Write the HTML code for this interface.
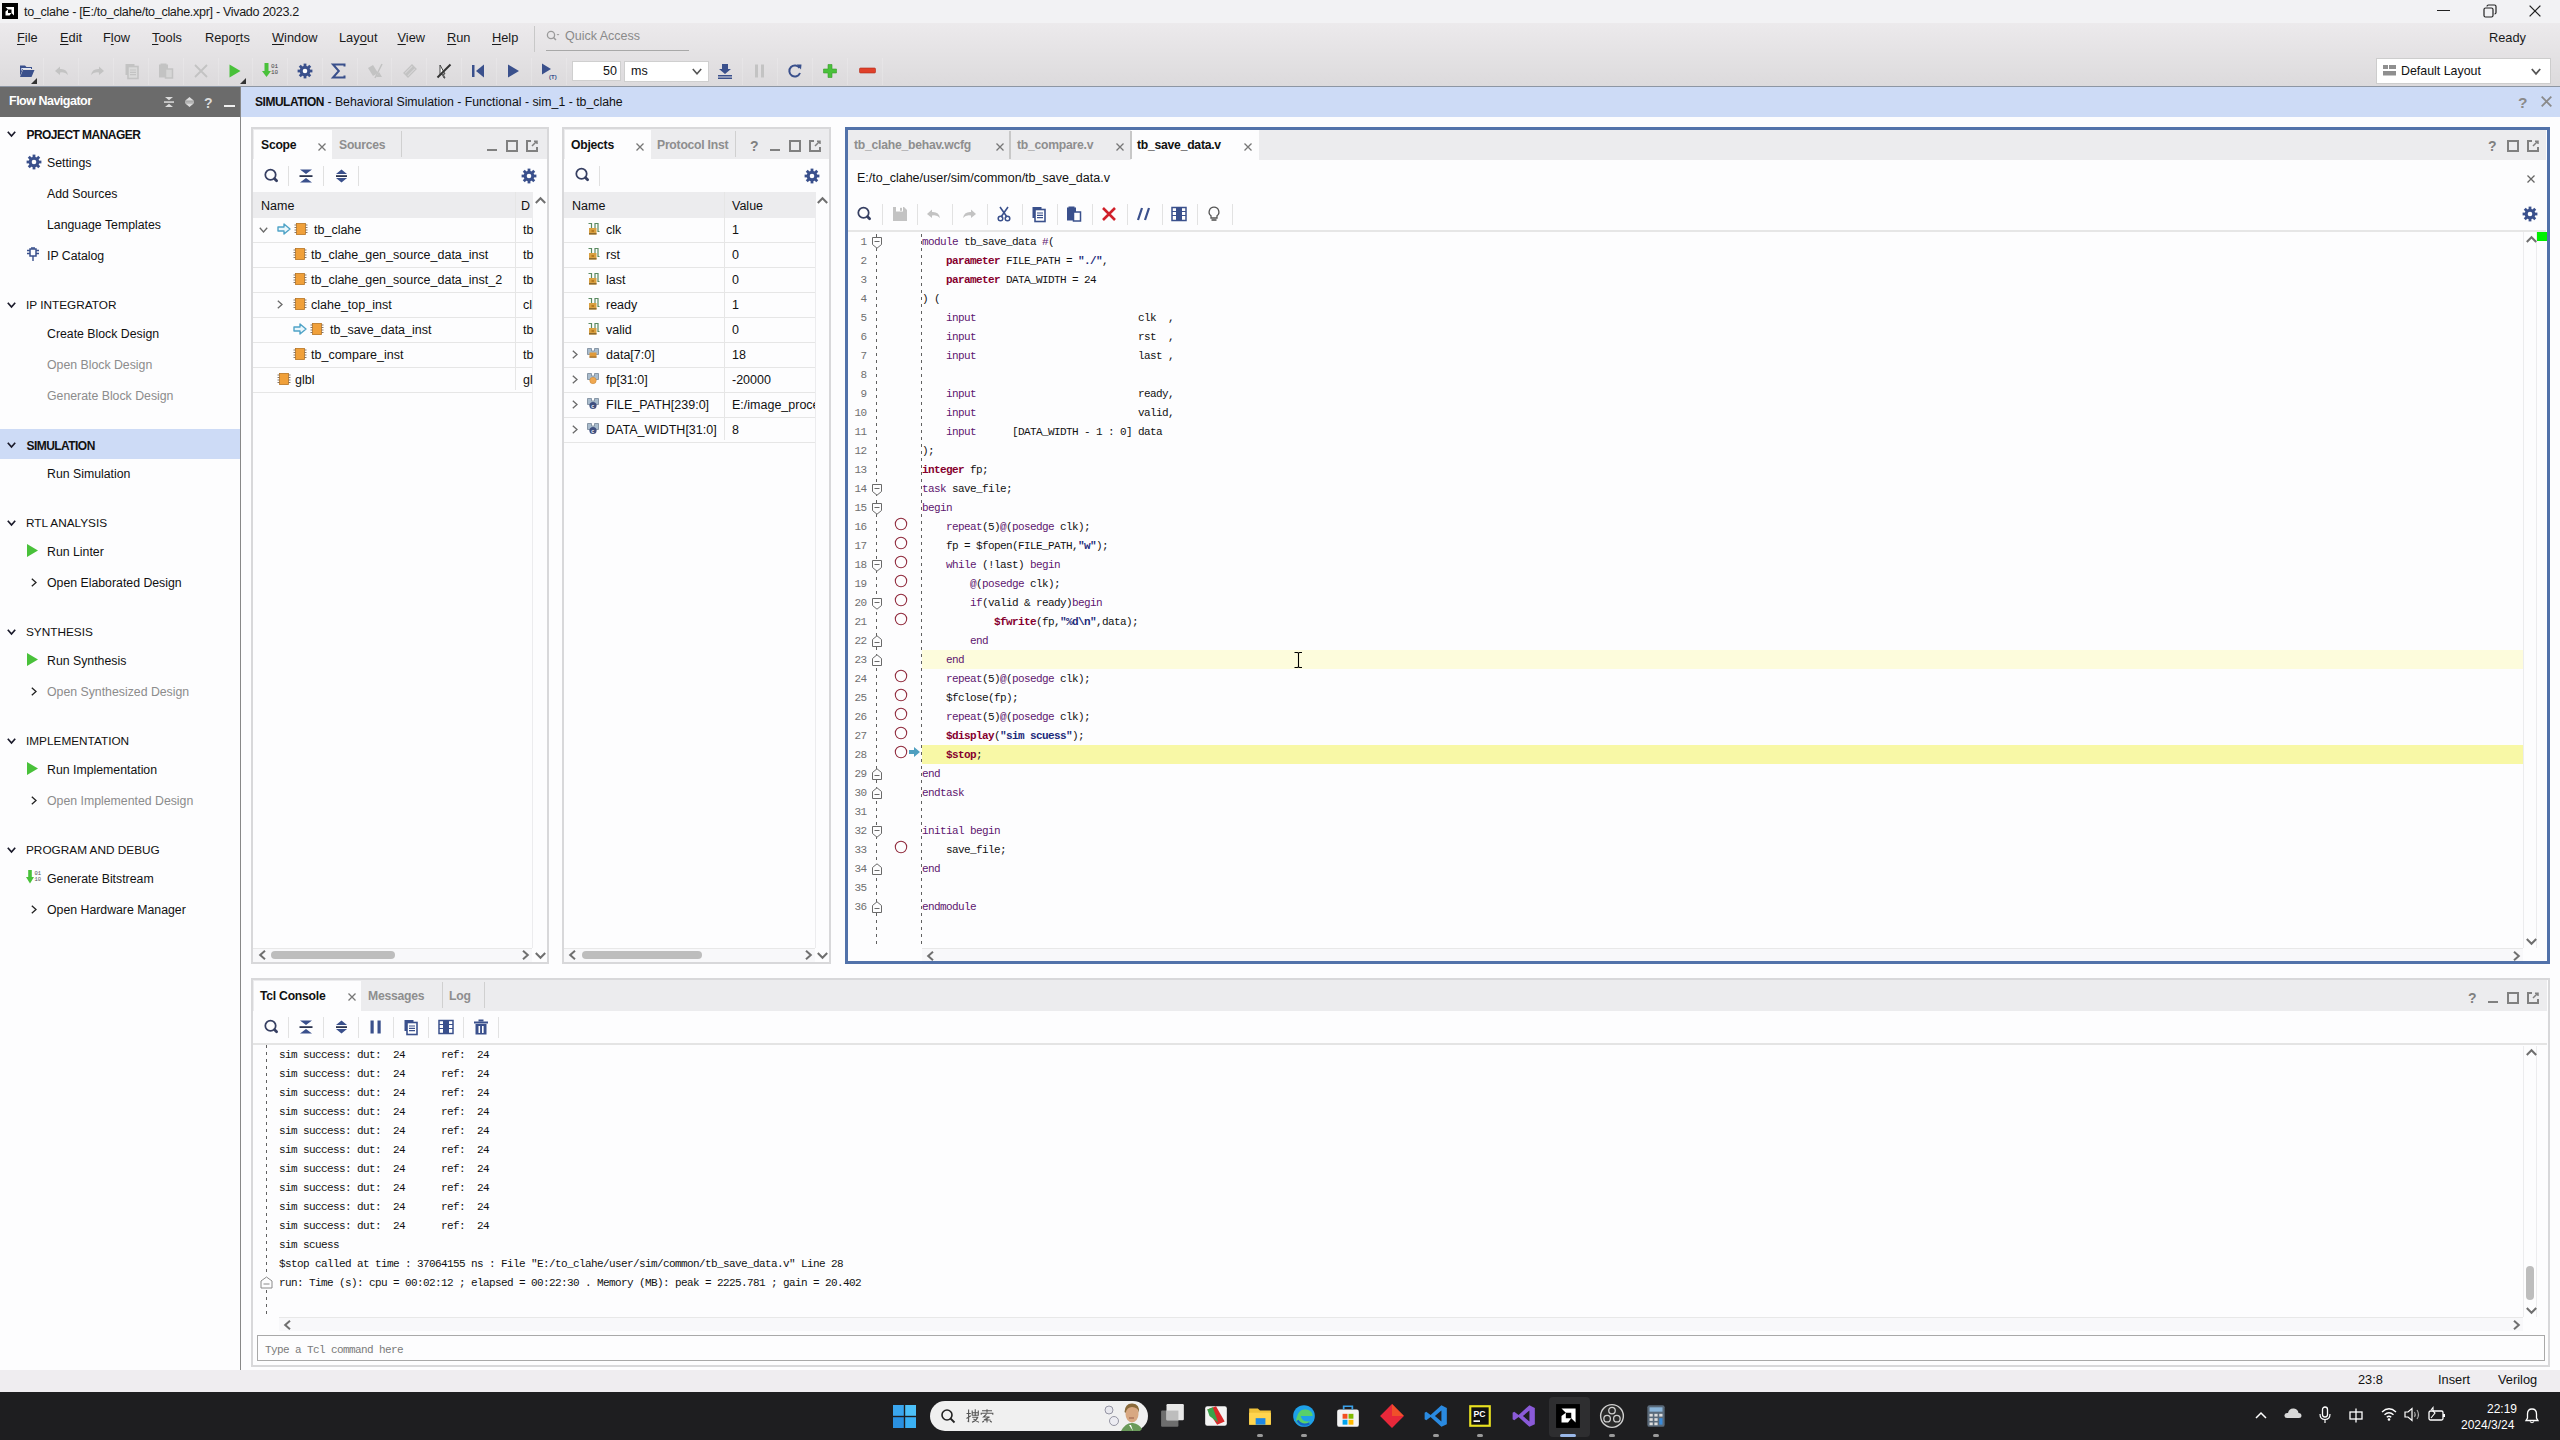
<!DOCTYPE html>
<html><head><meta charset="utf-8">
<style>
*{box-sizing:border-box}
html,body{margin:0;padding:0}
body{width:2560px;height:1440px;position:relative;overflow:hidden;background:#fdfdfe;font-family:"Liberation Sans",sans-serif;color:#111}
.a{position:absolute}
.t{position:absolute;white-space:pre;line-height:1}
.ico{position:absolute;overflow:visible}
.u{text-decoration:underline;text-decoration-thickness:1px;text-underline-offset:2px}
</style></head>
<body>
<div class="a" style="left:0px;top:0px;width:2560px;height:23px;background:#f2f2f4;"></div>
<div class="a" style="left:2px;top:3px;width:16px;height:16px;background:#000;"></div>
<svg class="ico" style="left:2px;top:3px;" width="16" height="16" viewBox="0 0 16 16"><path d="M3.5 4 H12 V12.5 L9.5 10 V6.5 H6 Z" fill="#fff"/><path d="M3.5 8.5 L6 6.5 V10 H9.5 L7.5 12.5 H3.5 Z" fill="#fff"/></svg>
<div class="t" style="left:24px;top:6.09px;font-size:12.6px;color:#1a1a1a;font-weight:normal;font-family:'Liberation Sans',sans-serif;letter-spacing:-0.33px">to_clahe - [E:/to_clahe/to_clahe.xpr] - Vivado 2023.2</div>
<div class="a" style="left:2437px;top:10px;width:13px;height:1.3px;background:#222;"></div>
<svg class="ico" style="left:2483px;top:4px;" width="14" height="14" viewBox="0 0 14 14"><rect x="1" y="4" width="9" height="9" rx="1.5" fill="none" stroke="#222" stroke-width="1.2"/><path d="M4 2.5 Q4 1 5.5 1 H11.5 Q13 1 13 2.5 V8.5 Q13 10 11.5 10" fill="none" stroke="#222" stroke-width="1.2"/></svg>
<svg class="ico" style="left:2529px;top:5px;" width="12" height="12" viewBox="0 0 12 12"><path d="M0.6 0.6 L11.4 11.4 M11.4 0.6 L0.6 11.4" stroke="#222" stroke-width="1.3"/></svg>
<div class="a" style="left:0px;top:23px;width:2560px;height:63px;background:linear-gradient(#eceaec,#dcdadc);"></div>
<div class="a" style="left:0px;top:86px;width:2560px;height:1px;background:#8d96a3;"></div>
<div class="t" style="left:17px;top:32.12px;font-size:12.8px;color:#1a1a1a;font-weight:normal;font-family:'Liberation Sans',sans-serif;"><span class="u">F</span>ile</div>
<div class="t" style="left:60px;top:32.12px;font-size:12.8px;color:#1a1a1a;font-weight:normal;font-family:'Liberation Sans',sans-serif;"><span class="u">E</span>dit</div>
<div class="t" style="left:103px;top:32.12px;font-size:12.8px;color:#1a1a1a;font-weight:normal;font-family:'Liberation Sans',sans-serif;">F<span class="u">l</span>ow</div>
<div class="t" style="left:152px;top:32.12px;font-size:12.8px;color:#1a1a1a;font-weight:normal;font-family:'Liberation Sans',sans-serif;"><span class="u">T</span>ools</div>
<div class="t" style="left:205px;top:32.12px;font-size:12.8px;color:#1a1a1a;font-weight:normal;font-family:'Liberation Sans',sans-serif;">Repo<span class="u">r</span>ts</div>
<div class="t" style="left:272px;top:32.12px;font-size:12.8px;color:#1a1a1a;font-weight:normal;font-family:'Liberation Sans',sans-serif;"><span class="u">W</span>indow</div>
<div class="t" style="left:339px;top:32.12px;font-size:12.8px;color:#1a1a1a;font-weight:normal;font-family:'Liberation Sans',sans-serif;">Lay<span class="u">o</span>ut</div>
<div class="t" style="left:397.5px;top:32.12px;font-size:12.8px;color:#1a1a1a;font-weight:normal;font-family:'Liberation Sans',sans-serif;"><span class="u">V</span>iew</div>
<div class="t" style="left:447px;top:32.12px;font-size:12.8px;color:#1a1a1a;font-weight:normal;font-family:'Liberation Sans',sans-serif;"><span class="u">R</span>un</div>
<div class="t" style="left:492px;top:32.12px;font-size:12.8px;color:#1a1a1a;font-weight:normal;font-family:'Liberation Sans',sans-serif;"><span class="u">H</span>elp</div>
<div class="a" style="left:534px;top:26px;width:1px;height:26px;background:#c8c8c8;"></div>
<svg class="ico" style="left:546px;top:30px;" width="14" height="12" viewBox="0 0 14 12"><circle cx="5" cy="5" r="3.6" fill="none" stroke="#9a9a9a" stroke-width="1.3"/><path d="M7.5 7.5 L10 10" stroke="#9a9a9a" stroke-width="1.5"/><path d="M10.5 4 L13.5 4 L12 5.5 Z" fill="#9a9a9a"/></svg>
<div class="t" style="left:565px;top:30.38px;font-size:12.5px;color:#8a8a8a;font-weight:normal;font-family:'Liberation Sans',sans-serif;">Quick Access</div>
<div class="a" style="left:546px;top:50px;width:143px;height:1px;background:#a8a8a8;"></div>
<div class="t" style="left:2489px;top:32.12px;font-size:12.8px;color:#1a1a1a;font-weight:normal;font-family:'Liberation Sans',sans-serif;">Ready</div>
<div class="a" style="left:43px;top:58px;width:1px;height:27px;background:rgba(255,255,255,0.18);"></div>
<div class="a" style="left:78px;top:58px;width:1px;height:27px;background:rgba(255,255,255,0.18);"></div>
<div class="a" style="left:113px;top:58px;width:1px;height:27px;background:rgba(255,255,255,0.18);"></div>
<div class="a" style="left:148px;top:58px;width:1px;height:27px;background:rgba(255,255,255,0.18);"></div>
<div class="a" style="left:183px;top:58px;width:1px;height:27px;background:rgba(255,255,255,0.18);"></div>
<div class="a" style="left:218px;top:58px;width:1px;height:27px;background:rgba(255,255,255,0.18);"></div>
<div class="a" style="left:252px;top:58px;width:1px;height:27px;background:rgba(255,255,255,0.18);"></div>
<div class="a" style="left:287px;top:58px;width:1px;height:27px;background:rgba(255,255,255,0.18);"></div>
<div class="a" style="left:322px;top:58px;width:1px;height:27px;background:rgba(255,255,255,0.18);"></div>
<div class="a" style="left:357px;top:58px;width:1px;height:27px;background:rgba(255,255,255,0.18);"></div>
<div class="a" style="left:391px;top:58px;width:1px;height:27px;background:rgba(255,255,255,0.18);"></div>
<div class="a" style="left:426px;top:58px;width:1px;height:27px;background:rgba(255,255,255,0.18);"></div>
<div class="a" style="left:461px;top:58px;width:1px;height:27px;background:rgba(255,255,255,0.18);"></div>
<div class="a" style="left:496px;top:58px;width:1px;height:27px;background:rgba(255,255,255,0.18);"></div>
<div class="a" style="left:531px;top:58px;width:1px;height:27px;background:rgba(255,255,255,0.18);"></div>
<div class="a" style="left:566px;top:58px;width:1px;height:27px;background:rgba(255,255,255,0.18);"></div>
<div class="a" style="left:742px;top:58px;width:1px;height:27px;background:rgba(255,255,255,0.18);"></div>
<div class="a" style="left:777px;top:58px;width:1px;height:27px;background:rgba(255,255,255,0.18);"></div>
<div class="a" style="left:812px;top:58px;width:1px;height:27px;background:rgba(255,255,255,0.18);"></div>
<div class="a" style="left:847px;top:58px;width:1px;height:27px;background:rgba(255,255,255,0.18);"></div>
<div class="a" style="left:882px;top:58px;width:1px;height:27px;background:rgba(255,255,255,0.18);"></div>
<svg class="ico" style="left:19px;top:63px;" width="16" height="16" viewBox="0 0 16 16"><path d="M1 2.5 H6 L7.5 4 H13 V6 H4 L1 13 Z" fill="#3a508c"/><path d="M4 7 H15.5 L12.5 14 H1 Z" fill="#3a508c"/><path d="M2.3 5 H12 V6 H3.2 L2.3 8.5 Z" fill="#dfe6f5"/></svg>
<svg class="ico" style="left:31px;top:78px;" width="6" height="6" viewBox="0 0 6 6"><path d="M6 0 V6 H0 Z" fill="#333"/></svg>
<svg class="ico" style="left:54px;top:63px;" width="16" height="16" viewBox="0 0 16 16"><path d="M1 8 L6 3.5 V6 Q13 5.5 14 12 Q11 8.5 6 9.5 V12 Z" fill="#c3c3c3"/></svg>
<svg class="ico" style="left:89px;top:63px;" width="16" height="16" viewBox="0 0 16 16"><path d="M15 8 L10 3.5 V6 Q3 5.5 2 12 Q5 8.5 10 9.5 V12 Z" fill="#c3c3c3"/></svg>
<svg class="ico" style="left:124px;top:63px;" width="16" height="16" viewBox="0 0 16 16"><rect x="1.5" y="1" width="9" height="11" fill="#c3c3c3"/><rect x="4" y="3.5" width="10" height="12" fill="#dadada" stroke="#c3c3c3" stroke-width="1.6"/><path d="M6 7 H12 M6 9.3 H12 M6 11.6 H12" stroke="#c3c3c3" stroke-width="1.2"/></svg>
<svg class="ico" style="left:158px;top:63px;" width="16" height="16" viewBox="0 0 16 16"><rect x="1" y="1.5" width="9" height="13" fill="#c3c3c3"/><rect x="2.5" y="0.5" width="6" height="2" fill="#c3c3c3"/><rect x="7.5" y="6" width="7" height="9" fill="#d6d6d6" stroke="#c3c3c3" stroke-width="1.5"/></svg>
<svg class="ico" style="left:194px;top:64px;" width="14" height="14" viewBox="0 0 14 14"><path d="M1 1 L13 13 M13 1 L1 13" stroke="#c3c3c3" stroke-width="1.8"/></svg>
<svg class="ico" style="left:228px;top:63px;" width="14" height="16" viewBox="0 0 14 16"><path d="M1.5 1.5 L12.5 8 L1.5 14.5 Z" fill="#49c13a"/></svg>
<svg class="ico" style="left:240px;top:78px;" width="6" height="6" viewBox="0 0 6 6"><path d="M6 0 V6 H0 Z" fill="#333"/></svg>
<svg class="ico" style="left:262px;top:62px;" width="16" height="18" viewBox="0 0 16 18"><rect x="2.5" y="1" width="4" height="10" fill="#49c13a"/><path d="M0 9 H9 L4.5 15 Z" fill="#49c13a"/><text x="9" y="6" font-size="6" font-family="Liberation Mono" fill="#444">01</text><text x="9" y="12" font-size="6" font-family="Liberation Mono" fill="#444">10</text></svg>
<svg class="ico" style="left:297px;top:63px;" width="16" height="16" viewBox="0 0 16 16"><rect x="6.6" y="0.6" width="2.8" height="3.4" fill="#3a508c" transform="rotate(0 8 8)"/><rect x="6.6" y="0.6" width="2.8" height="3.4" fill="#3a508c" transform="rotate(45 8 8)"/><rect x="6.6" y="0.6" width="2.8" height="3.4" fill="#3a508c" transform="rotate(90 8 8)"/><rect x="6.6" y="0.6" width="2.8" height="3.4" fill="#3a508c" transform="rotate(135 8 8)"/><rect x="6.6" y="0.6" width="2.8" height="3.4" fill="#3a508c" transform="rotate(180 8 8)"/><rect x="6.6" y="0.6" width="2.8" height="3.4" fill="#3a508c" transform="rotate(225 8 8)"/><rect x="6.6" y="0.6" width="2.8" height="3.4" fill="#3a508c" transform="rotate(270 8 8)"/><rect x="6.6" y="0.6" width="2.8" height="3.4" fill="#3a508c" transform="rotate(315 8 8)"/><circle cx="8" cy="8" r="5.3" fill="#3a508c"/><circle cx="8" cy="8" r="2.3" fill="#fff"/></svg>
<svg class="ico" style="left:331px;top:63px;" width="16" height="16" viewBox="0 0 16 16"><path d="M13.5 3.5 V1.5 H2 L7.8 8 L2 14.5 H13.5 V12.5" fill="none" stroke="#3a508c" stroke-width="2" stroke-linejoin="miter" stroke-miterlimit="10"/></svg>
<svg class="ico" style="left:367px;top:63px;" width="16" height="16" viewBox="0 0 16 16"><path d="M1 5 L6 2 L11 10 L6 13 Z" fill="#c3c3c3"/><path d="M8 15 L15 1" stroke="#c3c3c3" stroke-width="1.6"/><path d="M9 14 H15 L12 9 Z" fill="#c3c3c3"/></svg>
<svg class="ico" style="left:402px;top:63px;" width="16" height="16" viewBox="0 0 16 16"><path d="M2 10 L10 2 L14 6 L6 14 Z" fill="none" stroke="#c3c3c3" stroke-width="1.3"/><path d="M4 12 L12 4" stroke="#c3c3c3" stroke-width="3"/></svg>
<svg class="ico" style="left:436px;top:63px;" width="16" height="16" viewBox="0 0 16 16"><path d="M4 2 L9 11 L7 11 L9 15 L8 15 L6 11 L4 12 Z" fill="#fff" stroke="#444" stroke-width="1"/><path d="M1.5 14.5 L14.5 1.5" stroke="#333" stroke-width="2"/></svg>
<svg class="ico" style="left:470px;top:63px;" width="16" height="16" viewBox="0 0 16 16"><rect x="2" y="2" width="2.5" height="12" fill="#3a508c"/><path d="M14 1.5 V14.5 L6 8 Z" fill="#3a508c"/></svg>
<svg class="ico" style="left:506px;top:63px;" width="16" height="16" viewBox="0 0 16 16"><path d="M2 1.5 L13 8 L2 14.5 Z" fill="#3a508c"/></svg>
<svg class="ico" style="left:541px;top:62px;" width="18" height="18" viewBox="0 0 18 18"><path d="M1 1.5 L10 7 L1 12.5 Z" fill="#3a508c"/><text x="8" y="16.5" font-size="6" font-weight="bold" font-family="Liberation Sans" fill="#3a508c">(T)</text></svg>
<div class="a" style="left:572px;top:61px;width:49px;height:20px;background:#fff;border:1px solid #cfcfcf"></div>
<div class="t" style="left:603px;top:65.38px;font-size:12.5px;color:#111;font-weight:normal;font-family:'Liberation Sans',sans-serif;">50</div>
<div class="a" style="left:624px;top:61px;width:85px;height:21px;background:#fff;border:1px solid #cfcfcf"></div>
<div class="t" style="left:631px;top:65.38px;font-size:12.5px;color:#111;font-weight:normal;font-family:'Liberation Sans',sans-serif;">ms</div>
<svg class="ico" style="left:692px;top:68px;" width="10" height="7" viewBox="0 0 10 7"><path d="M0.8 1 L5.0 5.8 L9.2 1" fill="none" stroke="#555" stroke-width="1.6"/></svg>
<svg class="ico" style="left:717px;top:63px;" width="16" height="16" viewBox="0 0 16 16"><path d="M5 1 H11 V6 H14 L8 11 L2 6 H5 Z" fill="#3a508c"/><rect x="1" y="12" width="14" height="1.5" fill="#3a508c"/><rect x="1" y="14.5" width="14" height="1.5" fill="#3a508c"/></svg>
<svg class="ico" style="left:754px;top:63px;" width="12" height="16" viewBox="0 0 12 16"><rect x="1" y="1.5" width="3" height="13" fill="#c3c3c3"/><rect x="7" y="1.5" width="3" height="13" fill="#c3c3c3"/></svg>
<svg class="ico" style="left:787px;top:63px;" width="16" height="16" viewBox="0 0 16 16"><path d="M12.5 5 A5.5 5.5 0 1 0 13 10" fill="none" stroke="#3a508c" stroke-width="2"/><path d="M9.5 1.5 L14.5 1.5 L14 6.5 Z" fill="#3a508c"/></svg>
<svg class="ico" style="left:822px;top:63px;" width="16" height="16" viewBox="0 0 16 16"><path d="M6 1.5 H10 V6 H14.5 V10 H10 V14.5 H6 V10 H1.5 V6 H6 Z" fill="#49c13a" stroke="#3a9a2e" stroke-width="0.6"/></svg>
<svg class="ico" style="left:859px;top:67px;" width="17" height="8" viewBox="0 0 17 8"><rect x="0.5" y="1" width="16" height="5" rx="1" fill="#e0402a" stroke="#b02a18" stroke-width="0.6"/></svg>
<div class="a" style="left:2376px;top:58px;width:175px;height:26px;background:#fff;border:1px solid #cdcdcd"></div>
<svg class="ico" style="left:2383px;top:65px;" width="13" height="11" viewBox="0 0 13 11"><rect x="0" y="0" width="5" height="4" fill="#8f8f8f"/><rect x="6" y="0" width="7" height="4" fill="#8f8f8f"/><rect x="0" y="6" width="13" height="4.5" fill="#8f8f8f"/></svg>
<div class="t" style="left:2401px;top:64.96px;font-size:12.4px;color:#111;font-weight:normal;font-family:'Liberation Sans',sans-serif;">Default Layout</div>
<svg class="ico" style="left:2531px;top:68px;" width="10" height="7" viewBox="0 0 10 7"><path d="M0.8 1 L5.0 5.8 L9.2 1" fill="none" stroke="#555" stroke-width="1.8"/></svg>
<div class="a" style="left:0px;top:87px;width:240px;height:30px;background:#6b6b6b;"></div>
<div class="a" style="left:241px;top:87px;width:2319px;height:30px;background:#cddbf6;"></div>
<div class="a" style="left:240px;top:87px;width:1px;height:1283px;background:#888;"></div>
<div class="t" style="left:9px;top:95.38px;font-size:12.5px;color:#fff;font-weight:bold;font-family:'Liberation Sans',sans-serif;letter-spacing:-0.5px">Flow Navigator</div>
<svg class="ico" style="left:164px;top:97px;" width="10" height="10" viewBox="0 0 10 10"><path d="M1 0 H9 L5 3.2 Z M1 10 H9 L5 6.8 Z" fill="#dcdcdc"/><rect x="0" y="4.3" width="10" height="1.5" fill="#dcdcdc"/></svg>
<svg class="ico" style="left:184.5px;top:97px;" width="9" height="10" viewBox="0 0 9 10"><path d="M4.5 0 L9 3.8 H0 Z M4.5 10 L9 6.2 H0 Z" fill="#dcdcdc"/><rect x="0" y="4.3" width="9" height="1.5" fill="#c8c8c8"/></svg>
<div class="t" style="left:204px;top:95.60px;font-size:14px;color:#dcdcdc;font-weight:bold;font-family:'Liberation Sans',sans-serif;">?</div>
<div class="a" style="left:224px;top:105px;width:11px;height:2px;background:#f0f0f0;"></div>
<div class="t" style="left:255px;top:95.55px;font-size:12.3px;color:#111;font-weight:normal;font-family:'Liberation Sans',sans-serif;"><b style="font-size:12px;letter-spacing:-0.48px">SIMULATION</b> - Behavioral Simulation - Functional - sim_1 - tb_clahe</div>
<div class="t" style="left:2518px;top:94.83px;font-size:15.5px;color:#8a8a8a;font-weight:bold;font-family:'Liberation Sans',sans-serif;">?</div>
<svg class="ico" style="left:2541px;top:96px;" width="11" height="11" viewBox="0 0 11 11"><path d="M0.7 0.7 L10.3 10.3 M10.3 0.7 L0.7 10.3" stroke="#8a8a8a" stroke-width="1.8"/></svg>
<div class="a" style="left:0px;top:1370px;width:2560px;height:22px;background:#efedf0;"></div>
<div class="t" style="left:2358px;top:1374.12px;font-size:12.8px;color:#111;font-weight:normal;font-family:'Liberation Sans',sans-serif;">23:8</div>
<div class="t" style="left:2438px;top:1374.12px;font-size:12.8px;color:#111;font-weight:normal;font-family:'Liberation Sans',sans-serif;">Insert</div>
<div class="t" style="left:2498px;top:1374.12px;font-size:12.8px;color:#111;font-weight:normal;font-family:'Liberation Sans',sans-serif;">Verilog</div>
<div class="a" style="left:0px;top:429px;width:240px;height:30px;background:#cddbf6;"></div>
<svg class="ico" style="left:7px;top:131px;" width="9" height="6" viewBox="0 0 9 6"><path d="M0.8 0.8 L4.5 5 L8.2 0.8" fill="none" stroke="#1a1a2a" stroke-width="1.7"/></svg>
<div class="t" style="left:26.5px;top:129.10px;font-size:12px;color:#111;font-weight:bold;font-family:'Liberation Sans',sans-serif;letter-spacing:-0.55px">PROJECT MANAGER</div>
<div class="t" style="left:47px;top:156.84px;font-size:12.3px;color:#111;font-weight:normal;font-family:'Liberation Sans',sans-serif;">Settings</div>
<svg class="ico" style="left:26px;top:154px;" width="16" height="16" viewBox="0 0 16 16"><rect x="6.6" y="0.6" width="2.8" height="3.4" fill="#3a508c" transform="rotate(0 8 8)"/><rect x="6.6" y="0.6" width="2.8" height="3.4" fill="#3a508c" transform="rotate(45 8 8)"/><rect x="6.6" y="0.6" width="2.8" height="3.4" fill="#3a508c" transform="rotate(90 8 8)"/><rect x="6.6" y="0.6" width="2.8" height="3.4" fill="#3a508c" transform="rotate(135 8 8)"/><rect x="6.6" y="0.6" width="2.8" height="3.4" fill="#3a508c" transform="rotate(180 8 8)"/><rect x="6.6" y="0.6" width="2.8" height="3.4" fill="#3a508c" transform="rotate(225 8 8)"/><rect x="6.6" y="0.6" width="2.8" height="3.4" fill="#3a508c" transform="rotate(270 8 8)"/><rect x="6.6" y="0.6" width="2.8" height="3.4" fill="#3a508c" transform="rotate(315 8 8)"/><circle cx="8" cy="8" r="5.3" fill="#3a508c"/><circle cx="8" cy="8" r="2.3" fill="#fff"/></svg>
<div class="t" style="left:47px;top:187.84px;font-size:12.3px;color:#111;font-weight:normal;font-family:'Liberation Sans',sans-serif;">Add Sources</div>
<div class="t" style="left:47px;top:218.84px;font-size:12.3px;color:#111;font-weight:normal;font-family:'Liberation Sans',sans-serif;">Language Templates</div>
<div class="t" style="left:47px;top:249.84px;font-size:12.3px;color:#111;font-weight:normal;font-family:'Liberation Sans',sans-serif;">IP Catalog</div>
<svg class="ico" style="left:26px;top:247px;" width="14" height="15" viewBox="0 0 14 15"><rect x="4" y="2" width="6" height="7" fill="none" stroke="#3a508c" stroke-width="1.5"/><path d="M7 9 V14 M1 3.5 H4 M1 6.5 H4 M10 3.5 H13 M10 6.5 H13 M5 1 H9" stroke="#3a508c" stroke-width="1.4"/></svg>
<svg class="ico" style="left:7px;top:302px;" width="9" height="6" viewBox="0 0 9 6"><path d="M0.8 0.8 L4.5 5 L8.2 0.8" fill="none" stroke="#1a1a2a" stroke-width="1.7"/></svg>
<div class="t" style="left:26px;top:300.27px;font-size:11.8px;color:#111;font-weight:normal;font-family:'Liberation Sans',sans-serif;">IP INTEGRATOR</div>
<div class="t" style="left:47px;top:327.85px;font-size:12.3px;color:#111;font-weight:normal;font-family:'Liberation Sans',sans-serif;">Create Block Design</div>
<div class="t" style="left:47px;top:358.85px;font-size:12.3px;color:#8c8c8c;font-weight:normal;font-family:'Liberation Sans',sans-serif;">Open Block Design</div>
<div class="t" style="left:47px;top:389.85px;font-size:12.3px;color:#8c8c8c;font-weight:normal;font-family:'Liberation Sans',sans-serif;">Generate Block Design</div>
<svg class="ico" style="left:7px;top:442px;" width="9" height="6" viewBox="0 0 9 6"><path d="M0.8 0.8 L4.5 5 L8.2 0.8" fill="none" stroke="#1a1a2a" stroke-width="1.7"/></svg>
<div class="t" style="left:26.5px;top:440.10px;font-size:12px;color:#111;font-weight:bold;font-family:'Liberation Sans',sans-serif;letter-spacing:-0.55px">SIMULATION</div>
<div class="t" style="left:47px;top:467.85px;font-size:12.3px;color:#111;font-weight:normal;font-family:'Liberation Sans',sans-serif;">Run Simulation</div>
<svg class="ico" style="left:7px;top:520px;" width="9" height="6" viewBox="0 0 9 6"><path d="M0.8 0.8 L4.5 5 L8.2 0.8" fill="none" stroke="#1a1a2a" stroke-width="1.7"/></svg>
<div class="t" style="left:26px;top:518.27px;font-size:11.8px;color:#111;font-weight:normal;font-family:'Liberation Sans',sans-serif;">RTL ANALYSIS</div>
<div class="t" style="left:47px;top:545.84px;font-size:12.3px;color:#111;font-weight:normal;font-family:'Liberation Sans',sans-serif;">Run Linter</div>
<svg class="ico" style="left:26px;top:543px;" width="13" height="15" viewBox="0 0 13 15"><path d="M1 1 L12 7.5 L1 14 Z" fill="#49c13a"/></svg>
<div class="t" style="left:47px;top:576.84px;font-size:12.3px;color:#111;font-weight:normal;font-family:'Liberation Sans',sans-serif;">Open Elaborated Design</div>
<svg class="ico" style="left:31px;top:577.5px;" width="6" height="9" viewBox="0 0 6 9"><path d="M0.8 0.8 L5 4.5 L0.8 8.2" fill="none" stroke="#222" stroke-width="1.3"/></svg>
<svg class="ico" style="left:7px;top:629px;" width="9" height="6" viewBox="0 0 9 6"><path d="M0.8 0.8 L4.5 5 L8.2 0.8" fill="none" stroke="#1a1a2a" stroke-width="1.7"/></svg>
<div class="t" style="left:26px;top:627.27px;font-size:11.8px;color:#111;font-weight:normal;font-family:'Liberation Sans',sans-serif;">SYNTHESIS</div>
<div class="t" style="left:47px;top:654.84px;font-size:12.3px;color:#111;font-weight:normal;font-family:'Liberation Sans',sans-serif;">Run Synthesis</div>
<svg class="ico" style="left:26px;top:652px;" width="13" height="15" viewBox="0 0 13 15"><path d="M1 1 L12 7.5 L1 14 Z" fill="#49c13a"/></svg>
<div class="t" style="left:47px;top:685.84px;font-size:12.3px;color:#8c8c8c;font-weight:normal;font-family:'Liberation Sans',sans-serif;">Open Synthesized Design</div>
<svg class="ico" style="left:31px;top:686.5px;" width="6" height="9" viewBox="0 0 6 9"><path d="M0.8 0.8 L5 4.5 L0.8 8.2" fill="none" stroke="#222" stroke-width="1.3"/></svg>
<svg class="ico" style="left:7px;top:738px;" width="9" height="6" viewBox="0 0 9 6"><path d="M0.8 0.8 L4.5 5 L8.2 0.8" fill="none" stroke="#1a1a2a" stroke-width="1.7"/></svg>
<div class="t" style="left:26px;top:736.27px;font-size:11.8px;color:#111;font-weight:normal;font-family:'Liberation Sans',sans-serif;">IMPLEMENTATION</div>
<div class="t" style="left:47px;top:763.84px;font-size:12.3px;color:#111;font-weight:normal;font-family:'Liberation Sans',sans-serif;">Run Implementation</div>
<svg class="ico" style="left:26px;top:761px;" width="13" height="15" viewBox="0 0 13 15"><path d="M1 1 L12 7.5 L1 14 Z" fill="#49c13a"/></svg>
<div class="t" style="left:47px;top:794.84px;font-size:12.3px;color:#8c8c8c;font-weight:normal;font-family:'Liberation Sans',sans-serif;">Open Implemented Design</div>
<svg class="ico" style="left:31px;top:795.5px;" width="6" height="9" viewBox="0 0 6 9"><path d="M0.8 0.8 L5 4.5 L0.8 8.2" fill="none" stroke="#222" stroke-width="1.3"/></svg>
<svg class="ico" style="left:7px;top:847px;" width="9" height="6" viewBox="0 0 9 6"><path d="M0.8 0.8 L4.5 5 L8.2 0.8" fill="none" stroke="#1a1a2a" stroke-width="1.7"/></svg>
<div class="t" style="left:26px;top:845.27px;font-size:11.8px;color:#111;font-weight:normal;font-family:'Liberation Sans',sans-serif;">PROGRAM AND DEBUG</div>
<div class="t" style="left:47px;top:872.84px;font-size:12.3px;color:#111;font-weight:normal;font-family:'Liberation Sans',sans-serif;">Generate Bitstream</div>
<svg class="ico" style="left:26px;top:869px;" width="16" height="17" viewBox="0 0 16 17"><rect x="2.2" y="1" width="3.6" height="9" fill="#49c13a"/><path d="M0 8 H8 L4 14.5 Z" fill="#49c13a"/><text x="8.5" y="6" font-size="5.5" font-family="Liberation Mono" fill="#555">01</text><text x="8.5" y="11.5" font-size="5.5" font-family="Liberation Mono" fill="#555">10</text></svg>
<div class="t" style="left:47px;top:903.84px;font-size:12.3px;color:#111;font-weight:normal;font-family:'Liberation Sans',sans-serif;">Open Hardware Manager</div>
<svg class="ico" style="left:31px;top:904.5px;" width="6" height="9" viewBox="0 0 6 9"><path d="M0.8 0.8 L5 4.5 L0.8 8.2" fill="none" stroke="#222" stroke-width="1.3"/></svg>
<div class="a" style="left:251px;top:127px;width:298px;height:837px;background:#fdfdfe;border:2px solid #d8d8da"></div>
<div class="a" style="left:253px;top:129px;width:294px;height:30px;background:#ececee;"></div>
<div class="a" style="left:254px;top:130px;width:78px;height:30px;background:#fdfdfe;"></div>
<div class="t" style="left:261px;top:138.63px;font-size:12.2px;color:#111;font-weight:bold;font-family:'Liberation Sans',sans-serif;letter-spacing:-0.25px">Scope</div>
<svg class="ico" style="left:318px;top:143px;" width="8" height="8" viewBox="0 0 8 8"><path d="M0.5 0.5 L7.5 7.5 M7.5 0.5 L0.5 7.5" stroke="#777" stroke-width="1.3"/></svg>
<div class="t" style="left:339px;top:138.63px;font-size:12.2px;color:#8e8e8e;font-weight:bold;font-family:'Liberation Sans',sans-serif;letter-spacing:-0.25px">Sources</div>
<div class="a" style="left:401px;top:131px;width:1px;height:26px;background:#d0d0d0;"></div>
<div class="a" style="left:487px;top:149px;width:10px;height:2px;background:#808080;"></div>
<svg class="ico" style="left:506px;top:140px;" width="12" height="12" viewBox="0 0 12 12"><rect x="1" y="1" width="10" height="10" fill="none" stroke="#808080" stroke-width="2"/></svg>
<svg class="ico" style="left:526px;top:140px;" width="12" height="12" viewBox="0 0 12 12"><path d="M5 1 H1 V11 H11 V7" fill="none" stroke="#808080" stroke-width="2"/><path d="M6 6 L10.5 1.5 M8 1.2 H11 V4" fill="none" stroke="#808080" stroke-width="1.5"/></svg>
<svg class="ico" style="left:264px;top:168px;" width="16" height="16" viewBox="0 0 16 16"><circle cx="6.5" cy="6.7" r="5.2" fill="none" stroke="#363f62" stroke-width="1.75"/><path d="M10.6 10.8 L12.6 12.8" stroke="#363f62" stroke-width="2.8" stroke-linecap="round"/></svg>
<div class="a" style="left:288px;top:166px;width:1px;height:20px;background:#e0e0e0;"></div>
<svg class="ico" style="left:298px;top:168px;" width="16" height="16" viewBox="0 0 16 16"><path d="M2 1.5 H14 L8 6 Z M2 14.5 H14 L8 10 Z" fill="#3a508c"/><rect x="1.5" y="7.2" width="13" height="1.8" fill="#2c3550"/></svg>
<div class="a" style="left:323px;top:166px;width:1px;height:20px;background:#e0e0e0;"></div>
<svg class="ico" style="left:333px;top:168px;" width="16" height="16" viewBox="0 0 16 16"><path d="M8.5 1.5 L14 6 H3 Z M8.5 14.5 L14 10 H3 Z" fill="#3a508c"/><rect x="3" y="7.2" width="11" height="1.8" fill="#2c3550"/></svg>
<div class="a" style="left:358px;top:166px;width:1px;height:20px;background:#e0e0e0;"></div>
<svg class="ico" style="left:521px;top:168px;" width="16" height="16" viewBox="0 0 16 16"><rect x="6.6" y="0.6" width="2.8" height="3.4" fill="#3a508c" transform="rotate(0 8 8)"/><rect x="6.6" y="0.6" width="2.8" height="3.4" fill="#3a508c" transform="rotate(45 8 8)"/><rect x="6.6" y="0.6" width="2.8" height="3.4" fill="#3a508c" transform="rotate(90 8 8)"/><rect x="6.6" y="0.6" width="2.8" height="3.4" fill="#3a508c" transform="rotate(135 8 8)"/><rect x="6.6" y="0.6" width="2.8" height="3.4" fill="#3a508c" transform="rotate(180 8 8)"/><rect x="6.6" y="0.6" width="2.8" height="3.4" fill="#3a508c" transform="rotate(225 8 8)"/><rect x="6.6" y="0.6" width="2.8" height="3.4" fill="#3a508c" transform="rotate(270 8 8)"/><rect x="6.6" y="0.6" width="2.8" height="3.4" fill="#3a508c" transform="rotate(315 8 8)"/><circle cx="8" cy="8" r="5.3" fill="#3a508c"/><circle cx="8" cy="8" r="2.3" fill="#fff"/></svg>
<div class="a" style="left:253px;top:192px;width:280px;height:26px;background:#ececee;"></div>
<div class="a" style="left:515px;top:192px;width:1px;height:198px;background:#e6e6e6;"></div>
<div class="t" style="left:261px;top:200.38px;font-size:12.5px;color:#111;font-weight:normal;font-family:'Liberation Sans',sans-serif;">Name</div>
<div class="t" style="left:521px;top:200.38px;font-size:12.5px;color:#111;font-weight:normal;font-family:'Liberation Sans',sans-serif;">D</div>
<div class="a" style="left:532px;top:192px;width:1px;height:756px;background:#ececee;"></div>
<svg class="ico" style="left:535px;top:197px;" width="11" height="7" viewBox="0 0 11 7"><path d="M0.8 6 L5.5 1.2 L10.2 6" fill="none" stroke="#6f6f6f" stroke-width="2"/></svg>
<div class="a" style="left:253px;top:242px;width:279px;height:1px;background:#e6e6e6;"></div>
<div class="t" style="left:314px;top:223.88px;font-size:12.5px;color:#111;font-weight:normal;font-family:'Liberation Sans',sans-serif;">tb_clahe</div>
<div class="t" style="left:523px;top:223.88px;font-size:12.5px;color:#111;font-weight:normal;font-family:'Liberation Sans',sans-serif;">tb</div>
<svg class="ico" style="left:259px;top:227px;" width="9" height="6" viewBox="0 0 9 6"><path d="M0.8 0.8 L4.5 5 L8.2 0.8" fill="none" stroke="#6a6a6a" stroke-width="1.3"/></svg>
<svg class="ico" style="left:277px;top:223px;" width="14" height="12" viewBox="0 0 14 12"><path d="M1 4 H7 V1 L13 6 L7 11 V8 H1 Z" fill="#eaf6fb" stroke="#4fa3c7" stroke-width="1.4" stroke-linejoin="round"/></svg>
<svg class="ico" style="left:294px;top:222px;" width="14" height="14" viewBox="0 0 14 14"><rect x="2.5" y="1.5" width="9" height="11" fill="#f0a03a" stroke="#b87420" stroke-width="0.8"/><path d="M0.5 3 H2.5 M0.5 5.5 H2.5 M0.5 8 H2.5 M0.5 10.5 H2.5 M11.5 3 H13.5 M11.5 5.5 H13.5 M11.5 8 H13.5 M11.5 10.5 H13.5" stroke="#7a6a5a" stroke-width="0.9"/></svg>
<div class="a" style="left:253px;top:267px;width:279px;height:1px;background:#e6e6e6;"></div>
<div class="t" style="left:311px;top:248.88px;font-size:12.5px;color:#111;font-weight:normal;font-family:'Liberation Sans',sans-serif;">tb_clahe_gen_source_data_inst</div>
<div class="t" style="left:523px;top:248.88px;font-size:12.5px;color:#111;font-weight:normal;font-family:'Liberation Sans',sans-serif;">tb</div>
<svg class="ico" style="left:293px;top:247px;" width="14" height="14" viewBox="0 0 14 14"><rect x="2.5" y="1.5" width="9" height="11" fill="#f0a03a" stroke="#b87420" stroke-width="0.8"/><path d="M0.5 3 H2.5 M0.5 5.5 H2.5 M0.5 8 H2.5 M0.5 10.5 H2.5 M11.5 3 H13.5 M11.5 5.5 H13.5 M11.5 8 H13.5 M11.5 10.5 H13.5" stroke="#7a6a5a" stroke-width="0.9"/></svg>
<div class="a" style="left:253px;top:292px;width:279px;height:1px;background:#e6e6e6;"></div>
<div class="t" style="left:311px;top:273.88px;font-size:12.5px;color:#111;font-weight:normal;font-family:'Liberation Sans',sans-serif;">tb_clahe_gen_source_data_inst_2</div>
<div class="t" style="left:523px;top:273.88px;font-size:12.5px;color:#111;font-weight:normal;font-family:'Liberation Sans',sans-serif;">tb</div>
<svg class="ico" style="left:293px;top:272px;" width="14" height="14" viewBox="0 0 14 14"><rect x="2.5" y="1.5" width="9" height="11" fill="#f0a03a" stroke="#b87420" stroke-width="0.8"/><path d="M0.5 3 H2.5 M0.5 5.5 H2.5 M0.5 8 H2.5 M0.5 10.5 H2.5 M11.5 3 H13.5 M11.5 5.5 H13.5 M11.5 8 H13.5 M11.5 10.5 H13.5" stroke="#7a6a5a" stroke-width="0.9"/></svg>
<div class="a" style="left:253px;top:317px;width:279px;height:1px;background:#e6e6e6;"></div>
<div class="t" style="left:311px;top:298.88px;font-size:12.5px;color:#111;font-weight:normal;font-family:'Liberation Sans',sans-serif;">clahe_top_inst</div>
<div class="t" style="left:523px;top:298.88px;font-size:12.5px;color:#111;font-weight:normal;font-family:'Liberation Sans',sans-serif;">cl</div>
<svg class="ico" style="left:277px;top:300px;" width="6" height="9" viewBox="0 0 6 9"><path d="M0.8 0.8 L5 4.5 L0.8 8.2" fill="none" stroke="#6a6a6a" stroke-width="1.3"/></svg>
<svg class="ico" style="left:293px;top:297px;" width="14" height="14" viewBox="0 0 14 14"><rect x="2.5" y="1.5" width="9" height="11" fill="#f0a03a" stroke="#b87420" stroke-width="0.8"/><path d="M0.5 3 H2.5 M0.5 5.5 H2.5 M0.5 8 H2.5 M0.5 10.5 H2.5 M11.5 3 H13.5 M11.5 5.5 H13.5 M11.5 8 H13.5 M11.5 10.5 H13.5" stroke="#7a6a5a" stroke-width="0.9"/></svg>
<div class="a" style="left:253px;top:342px;width:279px;height:1px;background:#e6e6e6;"></div>
<div class="t" style="left:330px;top:323.88px;font-size:12.5px;color:#111;font-weight:normal;font-family:'Liberation Sans',sans-serif;">tb_save_data_inst</div>
<div class="t" style="left:523px;top:323.88px;font-size:12.5px;color:#111;font-weight:normal;font-family:'Liberation Sans',sans-serif;">tb</div>
<svg class="ico" style="left:293px;top:323px;" width="14" height="12" viewBox="0 0 14 12"><path d="M1 4 H7 V1 L13 6 L7 11 V8 H1 Z" fill="#eaf6fb" stroke="#4fa3c7" stroke-width="1.4" stroke-linejoin="round"/></svg>
<svg class="ico" style="left:310px;top:322px;" width="14" height="14" viewBox="0 0 14 14"><rect x="2.5" y="1.5" width="9" height="11" fill="#f0a03a" stroke="#b87420" stroke-width="0.8"/><path d="M0.5 3 H2.5 M0.5 5.5 H2.5 M0.5 8 H2.5 M0.5 10.5 H2.5 M11.5 3 H13.5 M11.5 5.5 H13.5 M11.5 8 H13.5 M11.5 10.5 H13.5" stroke="#7a6a5a" stroke-width="0.9"/></svg>
<div class="a" style="left:253px;top:367px;width:279px;height:1px;background:#e6e6e6;"></div>
<div class="t" style="left:311px;top:348.88px;font-size:12.5px;color:#111;font-weight:normal;font-family:'Liberation Sans',sans-serif;">tb_compare_inst</div>
<div class="t" style="left:523px;top:348.88px;font-size:12.5px;color:#111;font-weight:normal;font-family:'Liberation Sans',sans-serif;">tb</div>
<svg class="ico" style="left:293px;top:347px;" width="14" height="14" viewBox="0 0 14 14"><rect x="2.5" y="1.5" width="9" height="11" fill="#f0a03a" stroke="#b87420" stroke-width="0.8"/><path d="M0.5 3 H2.5 M0.5 5.5 H2.5 M0.5 8 H2.5 M0.5 10.5 H2.5 M11.5 3 H13.5 M11.5 5.5 H13.5 M11.5 8 H13.5 M11.5 10.5 H13.5" stroke="#7a6a5a" stroke-width="0.9"/></svg>
<div class="a" style="left:253px;top:392px;width:279px;height:1px;background:#e6e6e6;"></div>
<div class="t" style="left:295px;top:373.88px;font-size:12.5px;color:#111;font-weight:normal;font-family:'Liberation Sans',sans-serif;">glbl</div>
<div class="t" style="left:523px;top:373.88px;font-size:12.5px;color:#111;font-weight:normal;font-family:'Liberation Sans',sans-serif;">gl</div>
<svg class="ico" style="left:277px;top:372px;" width="14" height="14" viewBox="0 0 14 14"><rect x="2.5" y="1.5" width="9" height="11" fill="#f0a03a" stroke="#b87420" stroke-width="0.8"/><path d="M0.5 3 H2.5 M0.5 5.5 H2.5 M0.5 8 H2.5 M0.5 10.5 H2.5 M11.5 3 H13.5 M11.5 5.5 H13.5 M11.5 8 H13.5 M11.5 10.5 H13.5" stroke="#7a6a5a" stroke-width="0.9"/></svg>
<div class="a" style="left:253px;top:948px;width:279px;height:1px;background:#e8e8e8;"></div>
<div class="a" style="left:253px;top:949px;width:279px;height:13px;background:#f8f8fa;"></div>
<svg class="ico" style="left:259px;top:950px;" width="7" height="10" viewBox="0 0 7 10"><path d="M6 0.8 L1.2 5.0 L6 9.2" fill="none" stroke="#6f6f6f" stroke-width="2"/></svg>
<div class="a" style="left:271px;top:951px;width:124px;height:8px;background:#bdbdbd;border-radius:4px"></div>
<svg class="ico" style="left:522px;top:950px;" width="7" height="10" viewBox="0 0 7 10"><path d="M1 0.8 L5.8 5.0 L1 9.2" fill="none" stroke="#6f6f6f" stroke-width="2"/></svg>
<svg class="ico" style="left:535px;top:952px;" width="11" height="7" viewBox="0 0 11 7"><path d="M0.8 1 L5.5 5.8 L10.2 1" fill="none" stroke="#6f6f6f" stroke-width="2"/></svg>
<div class="a" style="left:562px;top:127px;width:269px;height:837px;background:#fdfdfe;border:2px solid #d8d8da"></div>
<div class="a" style="left:564px;top:129px;width:265px;height:30px;background:#ececee;"></div>
<div class="a" style="left:565px;top:130px;width:86px;height:30px;background:#fdfdfe;"></div>
<div class="t" style="left:571px;top:138.63px;font-size:12.2px;color:#111;font-weight:bold;font-family:'Liberation Sans',sans-serif;letter-spacing:-0.25px">Objects</div>
<svg class="ico" style="left:636px;top:143px;" width="8" height="8" viewBox="0 0 8 8"><path d="M0.5 0.5 L7.5 7.5 M7.5 0.5 L0.5 7.5" stroke="#777" stroke-width="1.3"/></svg>
<div class="t" style="left:657px;top:138.63px;font-size:12.2px;color:#8e8e8e;font-weight:bold;font-family:'Liberation Sans',sans-serif;letter-spacing:-0.25px">Protocol Inst</div>
<div class="a" style="left:735px;top:131px;width:1px;height:26px;background:#d0d0d0;"></div>
<div class="t" style="left:750px;top:139.10px;font-size:14px;color:#808080;font-weight:bold;font-family:'Liberation Sans',sans-serif;">?</div>
<div class="a" style="left:770px;top:149px;width:10px;height:2px;background:#808080;"></div>
<svg class="ico" style="left:789px;top:140px;" width="12" height="12" viewBox="0 0 12 12"><rect x="1" y="1" width="10" height="10" fill="none" stroke="#808080" stroke-width="2"/></svg>
<svg class="ico" style="left:809px;top:140px;" width="12" height="12" viewBox="0 0 12 12"><path d="M5 1 H1 V11 H11 V7" fill="none" stroke="#808080" stroke-width="2"/><path d="M6 6 L10.5 1.5 M8 1.2 H11 V4" fill="none" stroke="#808080" stroke-width="1.5"/></svg>
<svg class="ico" style="left:575px;top:167px;" width="16" height="16" viewBox="0 0 16 16"><circle cx="6.5" cy="6.7" r="5.2" fill="none" stroke="#363f62" stroke-width="1.75"/><path d="M10.6 10.8 L12.6 12.8" stroke="#363f62" stroke-width="2.8" stroke-linecap="round"/></svg>
<div class="a" style="left:599px;top:166px;width:1px;height:20px;background:#e0e0e0;"></div>
<svg class="ico" style="left:804px;top:168px;" width="16" height="16" viewBox="0 0 16 16"><rect x="6.6" y="0.6" width="2.8" height="3.4" fill="#3a508c" transform="rotate(0 8 8)"/><rect x="6.6" y="0.6" width="2.8" height="3.4" fill="#3a508c" transform="rotate(45 8 8)"/><rect x="6.6" y="0.6" width="2.8" height="3.4" fill="#3a508c" transform="rotate(90 8 8)"/><rect x="6.6" y="0.6" width="2.8" height="3.4" fill="#3a508c" transform="rotate(135 8 8)"/><rect x="6.6" y="0.6" width="2.8" height="3.4" fill="#3a508c" transform="rotate(180 8 8)"/><rect x="6.6" y="0.6" width="2.8" height="3.4" fill="#3a508c" transform="rotate(225 8 8)"/><rect x="6.6" y="0.6" width="2.8" height="3.4" fill="#3a508c" transform="rotate(270 8 8)"/><rect x="6.6" y="0.6" width="2.8" height="3.4" fill="#3a508c" transform="rotate(315 8 8)"/><circle cx="8" cy="8" r="5.3" fill="#3a508c"/><circle cx="8" cy="8" r="2.3" fill="#fff"/></svg>
<div class="a" style="left:564px;top:192px;width:251px;height:26px;background:#ececee;"></div>
<div class="a" style="left:724px;top:192px;width:1px;height:248px;background:#e6e6e6;"></div>
<div class="t" style="left:572px;top:200.38px;font-size:12.5px;color:#111;font-weight:normal;font-family:'Liberation Sans',sans-serif;">Name</div>
<div class="t" style="left:732px;top:200.38px;font-size:12.5px;color:#111;font-weight:normal;font-family:'Liberation Sans',sans-serif;">Value</div>
<div class="a" style="left:815px;top:192px;width:1px;height:756px;background:#ececee;"></div>
<svg class="ico" style="left:817px;top:197px;" width="11" height="7" viewBox="0 0 11 7"><path d="M0.8 6 L5.5 1.2 L10.2 6" fill="none" stroke="#6f6f6f" stroke-width="2"/></svg>
<div class="a" style="left:564px;top:242px;width:251px;height:1px;background:#e6e6e6;"></div>
<div class="t" style="left:606px;top:223.88px;font-size:12.5px;color:#111;font-weight:normal;font-family:'Liberation Sans',sans-serif;">clk</div>
<div class="t" style="left:732px;top:223.88px;font-size:12.5px;color:#111;font-weight:normal;font-family:'Liberation Sans',sans-serif;">1</div>
<svg class="ico" style="left:587px;top:222px;" width="13" height="14" viewBox="0 0 13 14"><path d="M1.5 1.5 H4.5 V9 M8 9 V1.5 H11 V9.5 H12.5" fill="none" stroke="#5a8a60" stroke-width="1.2"/><rect x="2" y="6" width="7.5" height="6.5" fill="#d9a040"/><rect x="2" y="11" width="7.5" height="1.5" fill="#8a6a30"/><rect x="4.5" y="8" width="2.5" height="2" fill="#b87a20"/></svg>
<div class="a" style="left:564px;top:267px;width:251px;height:1px;background:#e6e6e6;"></div>
<div class="t" style="left:606px;top:248.88px;font-size:12.5px;color:#111;font-weight:normal;font-family:'Liberation Sans',sans-serif;">rst</div>
<div class="t" style="left:732px;top:248.88px;font-size:12.5px;color:#111;font-weight:normal;font-family:'Liberation Sans',sans-serif;">0</div>
<svg class="ico" style="left:587px;top:247px;" width="13" height="14" viewBox="0 0 13 14"><path d="M1.5 1.5 H4.5 V9 M8 9 V1.5 H11 V9.5 H12.5" fill="none" stroke="#5a8a60" stroke-width="1.2"/><rect x="2" y="6" width="7.5" height="6.5" fill="#d9a040"/><rect x="2" y="11" width="7.5" height="1.5" fill="#8a6a30"/><rect x="4.5" y="8" width="2.5" height="2" fill="#b87a20"/></svg>
<div class="a" style="left:564px;top:292px;width:251px;height:1px;background:#e6e6e6;"></div>
<div class="t" style="left:606px;top:273.88px;font-size:12.5px;color:#111;font-weight:normal;font-family:'Liberation Sans',sans-serif;">last</div>
<div class="t" style="left:732px;top:273.88px;font-size:12.5px;color:#111;font-weight:normal;font-family:'Liberation Sans',sans-serif;">0</div>
<svg class="ico" style="left:587px;top:272px;" width="13" height="14" viewBox="0 0 13 14"><path d="M1.5 1.5 H4.5 V9 M8 9 V1.5 H11 V9.5 H12.5" fill="none" stroke="#5a8a60" stroke-width="1.2"/><rect x="2" y="6" width="7.5" height="6.5" fill="#d9a040"/><rect x="2" y="11" width="7.5" height="1.5" fill="#8a6a30"/><rect x="4.5" y="8" width="2.5" height="2" fill="#b87a20"/></svg>
<div class="a" style="left:564px;top:317px;width:251px;height:1px;background:#e6e6e6;"></div>
<div class="t" style="left:606px;top:298.88px;font-size:12.5px;color:#111;font-weight:normal;font-family:'Liberation Sans',sans-serif;">ready</div>
<div class="t" style="left:732px;top:298.88px;font-size:12.5px;color:#111;font-weight:normal;font-family:'Liberation Sans',sans-serif;">1</div>
<svg class="ico" style="left:587px;top:297px;" width="13" height="14" viewBox="0 0 13 14"><path d="M1.5 1.5 H4.5 V9 M8 9 V1.5 H11 V9.5 H12.5" fill="none" stroke="#5a8a60" stroke-width="1.2"/><rect x="2" y="6" width="7.5" height="6.5" fill="#d9a040"/><rect x="2" y="11" width="7.5" height="1.5" fill="#8a6a30"/><rect x="4.5" y="8" width="2.5" height="2" fill="#b87a20"/></svg>
<div class="a" style="left:564px;top:342px;width:251px;height:1px;background:#e6e6e6;"></div>
<div class="t" style="left:606px;top:323.88px;font-size:12.5px;color:#111;font-weight:normal;font-family:'Liberation Sans',sans-serif;">valid</div>
<div class="t" style="left:732px;top:323.88px;font-size:12.5px;color:#111;font-weight:normal;font-family:'Liberation Sans',sans-serif;">0</div>
<svg class="ico" style="left:587px;top:322px;" width="13" height="14" viewBox="0 0 13 14"><path d="M1.5 1.5 H4.5 V9 M8 9 V1.5 H11 V9.5 H12.5" fill="none" stroke="#5a8a60" stroke-width="1.2"/><rect x="2" y="6" width="7.5" height="6.5" fill="#d9a040"/><rect x="2" y="11" width="7.5" height="1.5" fill="#8a6a30"/><rect x="4.5" y="8" width="2.5" height="2" fill="#b87a20"/></svg>
<div class="a" style="left:564px;top:367px;width:251px;height:1px;background:#e6e6e6;"></div>
<div class="t" style="left:606px;top:348.88px;font-size:12.5px;color:#111;font-weight:normal;font-family:'Liberation Sans',sans-serif;">data[7:0]</div>
<div class="t" style="left:732px;top:348.88px;font-size:12.5px;color:#111;font-weight:normal;font-family:'Liberation Sans',sans-serif;">18</div>
<svg class="ico" style="left:572px;top:350px;" width="6" height="9" viewBox="0 0 6 9"><path d="M0.8 0.8 L5 4.5 L0.8 8.2" fill="none" stroke="#6a6a6a" stroke-width="1.3"/></svg>
<svg class="ico" style="left:587px;top:348px;" width="13" height="12" viewBox="0 0 13 12"><path d="M0.5 0.5 H4.5 V3 H7.5 V0.5 H11.5 V6.5 H0.5 Z" fill="#a9bccd" stroke="#7f8f9f" stroke-width="0.9"/><rect x="2.5" y="4.5" width="7" height="5" fill="#e09a3a"/><rect x="2.5" y="8.5" width="7" height="1.2" fill="#9a6a2a"/></svg>
<div class="a" style="left:564px;top:392px;width:251px;height:1px;background:#e6e6e6;"></div>
<div class="t" style="left:606px;top:373.88px;font-size:12.5px;color:#111;font-weight:normal;font-family:'Liberation Sans',sans-serif;">fp[31:0]</div>
<div class="t" style="left:732px;top:373.88px;font-size:12.5px;color:#111;font-weight:normal;font-family:'Liberation Sans',sans-serif;">-20000</div>
<svg class="ico" style="left:572px;top:375px;" width="6" height="9" viewBox="0 0 6 9"><path d="M0.8 0.8 L5 4.5 L0.8 8.2" fill="none" stroke="#6a6a6a" stroke-width="1.3"/></svg>
<svg class="ico" style="left:587px;top:373px;" width="13" height="12" viewBox="0 0 13 12"><path d="M0.5 0.5 H4.5 V3 H7.5 V0.5 H11.5 V6.5 H0.5 Z" fill="#a9bccd" stroke="#7f8f9f" stroke-width="0.9"/><circle cx="6" cy="7.5" r="3.2" fill="#f0a850" stroke="#c98a3a" stroke-width="0.6"/></svg>
<div class="a" style="left:564px;top:417px;width:251px;height:1px;background:#e6e6e6;"></div>
<div class="t" style="left:606px;top:398.88px;font-size:12.5px;color:#111;font-weight:normal;font-family:'Liberation Sans',sans-serif;">FILE_PATH[239:0]</div>
<div class="a" style="left:732px;top:396px;width:83px;height:18px;overflow:hidden"><div class="t" style="left:0;top:2.88px;font-size:12.5px">E:/image_proce</div></div>
<svg class="ico" style="left:572px;top:400px;" width="6" height="9" viewBox="0 0 6 9"><path d="M0.8 0.8 L5 4.5 L0.8 8.2" fill="none" stroke="#6a6a6a" stroke-width="1.3"/></svg>
<svg class="ico" style="left:587px;top:398px;" width="13" height="12" viewBox="0 0 13 12"><path d="M0.5 0.5 H4.5 V3 H7.5 V0.5 H11.5 V6.5 H0.5 Z" fill="#a9bccd" stroke="#7f8f9f" stroke-width="0.9"/><circle cx="6" cy="7.5" r="3.6" fill="#3f4f80"/><text x="4.3" y="9.6" font-size="5" font-weight="bold" fill="#fff" font-family="Liberation Sans">c</text></svg>
<div class="a" style="left:564px;top:442px;width:251px;height:1px;background:#e6e6e6;"></div>
<div class="t" style="left:606px;top:423.88px;font-size:12.5px;color:#111;font-weight:normal;font-family:'Liberation Sans',sans-serif;">DATA_WIDTH[31:0]</div>
<div class="a" style="left:732px;top:421px;width:83px;height:18px;overflow:hidden"><div class="t" style="left:0;top:2.88px;font-size:12.5px">8</div></div>
<svg class="ico" style="left:572px;top:425px;" width="6" height="9" viewBox="0 0 6 9"><path d="M0.8 0.8 L5 4.5 L0.8 8.2" fill="none" stroke="#6a6a6a" stroke-width="1.3"/></svg>
<svg class="ico" style="left:587px;top:423px;" width="13" height="12" viewBox="0 0 13 12"><path d="M0.5 0.5 H4.5 V3 H7.5 V0.5 H11.5 V6.5 H0.5 Z" fill="#a9bccd" stroke="#7f8f9f" stroke-width="0.9"/><circle cx="6" cy="7.5" r="3.6" fill="#3f4f80"/><text x="4.3" y="9.6" font-size="5" font-weight="bold" fill="#fff" font-family="Liberation Sans">c</text></svg>
<div class="a" style="left:564px;top:948px;width:251px;height:1px;background:#e8e8e8;"></div>
<div class="a" style="left:564px;top:949px;width:251px;height:13px;background:#f8f8fa;"></div>
<svg class="ico" style="left:569px;top:950px;" width="7" height="10" viewBox="0 0 7 10"><path d="M6 0.8 L1.2 5.0 L6 9.2" fill="none" stroke="#6f6f6f" stroke-width="2"/></svg>
<div class="a" style="left:582px;top:951px;width:120px;height:8px;background:#bdbdbd;border-radius:4px"></div>
<svg class="ico" style="left:805px;top:950px;" width="7" height="10" viewBox="0 0 7 10"><path d="M1 0.8 L5.8 5.0 L1 9.2" fill="none" stroke="#6f6f6f" stroke-width="2"/></svg>
<svg class="ico" style="left:817px;top:952px;" width="11" height="7" viewBox="0 0 11 7"><path d="M0.8 1 L5.5 5.8 L10.2 1" fill="none" stroke="#6f6f6f" stroke-width="2"/></svg>
<div class="a" style="left:845px;top:127px;width:1705px;height:837px;background:#fdfdfe;border:3px solid #5272aa"></div>
<div class="a" style="left:848px;top:130px;width:1698px;height:30px;background:#ececee;"></div>
<div class="a" style="left:1131px;top:130px;width:128px;height:30px;background:#fdfdfe;"></div>
<div class="t" style="left:854px;top:138.63px;font-size:12.2px;color:#8e8e8e;font-weight:bold;font-family:'Liberation Sans',sans-serif;letter-spacing:-0.25px">tb_clahe_behav.wcfg</div>
<svg class="ico" style="left:996px;top:143px;" width="8" height="8" viewBox="0 0 8 8"><path d="M0.5 0.5 L7.5 7.5 M7.5 0.5 L0.5 7.5" stroke="#777" stroke-width="1.3"/></svg>
<div class="a" style="left:1009px;top:131px;width:1.5px;height:28px;background:#c8c8c8;"></div>
<div class="t" style="left:1017px;top:138.63px;font-size:12.2px;color:#8e8e8e;font-weight:bold;font-family:'Liberation Sans',sans-serif;letter-spacing:-0.25px">tb_compare.v</div>
<svg class="ico" style="left:1116px;top:143px;" width="8" height="8" viewBox="0 0 8 8"><path d="M0.5 0.5 L7.5 7.5 M7.5 0.5 L0.5 7.5" stroke="#777" stroke-width="1.3"/></svg>
<div class="a" style="left:1130px;top:131px;width:1.5px;height:28px;background:#c8c8c8;"></div>
<div class="t" style="left:1137px;top:138.63px;font-size:12.2px;color:#111;font-weight:bold;font-family:'Liberation Sans',sans-serif;letter-spacing:-0.25px">tb_save_data.v</div>
<svg class="ico" style="left:1244px;top:143px;" width="8" height="8" viewBox="0 0 8 8"><path d="M0.5 0.5 L7.5 7.5 M7.5 0.5 L0.5 7.5" stroke="#777" stroke-width="1.3"/></svg>
<div class="t" style="left:2488px;top:139.10px;font-size:14px;color:#808080;font-weight:bold;font-family:'Liberation Sans',sans-serif;">?</div>
<svg class="ico" style="left:2507px;top:140px;" width="12" height="12" viewBox="0 0 12 12"><rect x="1" y="1" width="10" height="10" fill="none" stroke="#808080" stroke-width="2"/></svg>
<svg class="ico" style="left:2527px;top:140px;" width="12" height="12" viewBox="0 0 12 12"><path d="M5 1 H1 V11 H11 V7" fill="none" stroke="#808080" stroke-width="2"/><path d="M6 6 L10.5 1.5 M8 1.2 H11 V4" fill="none" stroke="#808080" stroke-width="1.5"/></svg>
<div class="t" style="left:857px;top:172.38px;font-size:12.5px;color:#111;font-weight:normal;font-family:'Liberation Sans',sans-serif;">E:/to_clahe/user/sim/common/tb_save_data.v</div>
<svg class="ico" style="left:2527px;top:175px;" width="8" height="8" viewBox="0 0 8 8"><path d="M0.5 0.5 L7.5 7.5 M7.5 0.5 L0.5 7.5" stroke="#666" stroke-width="1.3"/></svg>
<svg class="ico" style="left:857px;top:206px;" width="16" height="16" viewBox="0 0 16 16"><circle cx="6.5" cy="6.7" r="5.2" fill="none" stroke="#363f62" stroke-width="1.75"/><path d="M10.6 10.8 L12.6 12.8" stroke="#363f62" stroke-width="2.8" stroke-linecap="round"/></svg>
<svg class="ico" style="left:892px;top:206px;" width="16" height="16" viewBox="0 0 16 16"><path d="M1 1 H12 L15 4 V15 H1 Z" fill="#c3c3c3"/><rect x="4" y="1" width="7" height="4.5" fill="#fff"/><rect x="8" y="1.8" width="2" height="3" fill="#c3c3c3"/></svg>
<svg class="ico" style="left:926px;top:206px;" width="16" height="16" viewBox="0 0 16 16"><path d="M1 8 L6 3.5 V6 Q13 5.5 14 12 Q11 8.5 6 9.5 V12 Z" fill="#c3c3c3"/></svg>
<svg class="ico" style="left:961px;top:206px;" width="16" height="16" viewBox="0 0 16 16"><path d="M15 8 L10 3.5 V6 Q3 5.5 2 12 Q5 8.5 10 9.5 V12 Z" fill="#c3c3c3"/></svg>
<svg class="ico" style="left:996px;top:206px;" width="16" height="16" viewBox="0 0 16 16"><path d="M4 1 L11 11 M12 1 L5 11" stroke="#3a508c" stroke-width="1.6"/><circle cx="4.5" cy="12.5" r="2.3" fill="none" stroke="#3a508c" stroke-width="1.5"/><circle cx="11.5" cy="12.5" r="2.3" fill="none" stroke="#3a508c" stroke-width="1.5"/></svg>
<svg class="ico" style="left:1031px;top:206px;" width="16" height="16" viewBox="0 0 16 16"><rect x="1.5" y="1" width="9" height="11" fill="#3a508c"/><rect x="4" y="3.5" width="10" height="12" fill="#fff" stroke="#3a508c" stroke-width="1.6"/><path d="M6 7 H12 M6 9.3 H12 M6 11.6 H12" stroke="#3a508c" stroke-width="1.2"/></svg>
<svg class="ico" style="left:1066px;top:206px;" width="16" height="16" viewBox="0 0 16 16"><rect x="1" y="1.5" width="9" height="13" fill="#3a508c"/><rect x="2.5" y="0.5" width="6" height="2" fill="#3a508c"/><rect x="7.5" y="6" width="7" height="9" fill="#fff" stroke="#3a508c" stroke-width="1.5"/></svg>
<svg class="ico" style="left:1101px;top:206px;" width="16" height="16" viewBox="0 0 16 16"><path d="M2 2 L14 14 M14 2 L2 14" stroke="#d0202a" stroke-width="2.6"/></svg>
<svg class="ico" style="left:1136px;top:206px;" width="16" height="16" viewBox="0 0 16 16"><path d="M6 2 L2 14 M13 2 L9 14" stroke="#3a508c" stroke-width="2.2"/></svg>
<svg class="ico" style="left:1171px;top:206px;" width="16" height="16" viewBox="0 0 16 16"><rect x="1" y="1.5" width="14" height="13" fill="#fff" stroke="#3a508c" stroke-width="1.5"/><rect x="5" y="1.5" width="6" height="13" fill="#3a508c"/><path d="M1 5.5 H5 M1 9.5 H5 M11 5.5 H15 M11 9.5 H15" stroke="#3a508c" stroke-width="1.2"/></svg>
<svg class="ico" style="left:1207px;top:206px;" width="14" height="16" viewBox="0 0 14 16"><path d="M7 1.2 A4.8 4.8 0 0 1 10 9.8 V12 H4 V9.8 A4.8 4.8 0 0 1 7 1.2 Z" fill="none" stroke="#555" stroke-width="1.3"/><rect x="4.5" y="13.2" width="5" height="1.6" fill="#555"/></svg>
<div class="a" style="left:882px;top:204px;width:1px;height:21px;background:#e2e2e2;"></div>
<div class="a" style="left:917px;top:204px;width:1px;height:21px;background:#e2e2e2;"></div>
<div class="a" style="left:952px;top:204px;width:1px;height:21px;background:#e2e2e2;"></div>
<div class="a" style="left:987px;top:204px;width:1px;height:21px;background:#e2e2e2;"></div>
<div class="a" style="left:1022px;top:204px;width:1px;height:21px;background:#e2e2e2;"></div>
<div class="a" style="left:1057px;top:204px;width:1px;height:21px;background:#e2e2e2;"></div>
<div class="a" style="left:1092px;top:204px;width:1px;height:21px;background:#e2e2e2;"></div>
<div class="a" style="left:1127px;top:204px;width:1px;height:21px;background:#e2e2e2;"></div>
<div class="a" style="left:1162px;top:204px;width:1px;height:21px;background:#e2e2e2;"></div>
<div class="a" style="left:1197px;top:204px;width:1px;height:21px;background:#e2e2e2;"></div>
<div class="a" style="left:1232px;top:204px;width:1px;height:21px;background:#e2e2e2;"></div>
<svg class="ico" style="left:2522px;top:206px;" width="16" height="16" viewBox="0 0 16 16"><rect x="6.6" y="0.6" width="2.8" height="3.4" fill="#3a508c" transform="rotate(0 8 8)"/><rect x="6.6" y="0.6" width="2.8" height="3.4" fill="#3a508c" transform="rotate(45 8 8)"/><rect x="6.6" y="0.6" width="2.8" height="3.4" fill="#3a508c" transform="rotate(90 8 8)"/><rect x="6.6" y="0.6" width="2.8" height="3.4" fill="#3a508c" transform="rotate(135 8 8)"/><rect x="6.6" y="0.6" width="2.8" height="3.4" fill="#3a508c" transform="rotate(180 8 8)"/><rect x="6.6" y="0.6" width="2.8" height="3.4" fill="#3a508c" transform="rotate(225 8 8)"/><rect x="6.6" y="0.6" width="2.8" height="3.4" fill="#3a508c" transform="rotate(270 8 8)"/><rect x="6.6" y="0.6" width="2.8" height="3.4" fill="#3a508c" transform="rotate(315 8 8)"/><circle cx="8" cy="8" r="5.3" fill="#3a508c"/><circle cx="8" cy="8" r="2.3" fill="#fff"/></svg>
<div class="a" style="left:848px;top:230px;width:1698px;height:2px;background:#e6e6e6;"></div>
<div class="a" style="left:2523px;top:232px;width:1px;height:716px;background:#ececee;"></div>
<div class="a" style="left:2536px;top:232px;width:1px;height:716px;background:#ececee;"></div>
<div class="a" style="left:2537px;top:232px;width:10px;height:9px;background:#00f000;"></div>
<svg class="ico" style="left:2526px;top:236px;" width="11" height="7" viewBox="0 0 11 7"><path d="M0.8 6 L5.5 1.2 L10.2 6" fill="none" stroke="#6f6f6f" stroke-width="2"/></svg>
<svg class="ico" style="left:2526px;top:938px;" width="11" height="7" viewBox="0 0 11 7"><path d="M0.8 1 L5.5 5.8 L10.2 1" fill="none" stroke="#6f6f6f" stroke-width="2"/></svg>
<div class="a" style="left:922px;top:650px;width:1601px;height:19px;background:#fdfcdc;"></div>
<div class="a" style="left:922px;top:745px;width:1601px;height:19px;background:#f8f8a6;"></div>
<div class="a" style="left:876px;top:234px;width:1px;height:712px;background:repeating-linear-gradient(#606060 0 3px, transparent 3px 7px);"></div>
<div class="a" style="left:921px;top:234px;width:1px;height:712px;background:repeating-linear-gradient(#606060 0 3px, transparent 3px 7px);"></div>
<div class="t" style="left:860.5px;top:236.64px;font-size:11px;color:#6f6f6f;font-weight:normal;font-family:'Liberation Mono',monospace;letter-spacing:-0.6px">1</div>
<svg class="ico" style="left:871px;top:236px;" width="12" height="13" viewBox="0 0 12 13"><path d="M1.5 1.5 H10.5 V8.5 L6 12.2 L1.5 8.5 Z" fill="#fdfdfe" stroke="#6a6a6a" stroke-width="1"/><path d="M3.5 5.5 H8.5" stroke="#6a6a6a" stroke-width="1"/></svg>
<div class="t" style="left:922px;top:236.64px;font-size:11px;color:#111;font-weight:normal;font-family:'Liberation Mono',monospace;letter-spacing:-0.6px"><span style="color:#5e1670">module</span> tb_save_data <span style="color:#5e1670">#</span>(</div>
<div class="t" style="left:860.5px;top:255.64px;font-size:11px;color:#6f6f6f;font-weight:normal;font-family:'Liberation Mono',monospace;letter-spacing:-0.6px">2</div>
<div class="t" style="left:922px;top:255.64px;font-size:11px;color:#111;font-weight:normal;font-family:'Liberation Mono',monospace;letter-spacing:-0.6px">    <span style="color:#86002e;font-weight:bold">parameter</span> FILE_PATH = <span style="color:#1c2a7a;font-weight:bold">&quot;./&quot;</span>,</div>
<div class="t" style="left:860.5px;top:274.64px;font-size:11px;color:#6f6f6f;font-weight:normal;font-family:'Liberation Mono',monospace;letter-spacing:-0.6px">3</div>
<div class="t" style="left:922px;top:274.64px;font-size:11px;color:#111;font-weight:normal;font-family:'Liberation Mono',monospace;letter-spacing:-0.6px">    <span style="color:#86002e;font-weight:bold">parameter</span> DATA_WIDTH = 24</div>
<div class="t" style="left:860.5px;top:293.64px;font-size:11px;color:#6f6f6f;font-weight:normal;font-family:'Liberation Mono',monospace;letter-spacing:-0.6px">4</div>
<div class="t" style="left:922px;top:293.64px;font-size:11px;color:#111;font-weight:normal;font-family:'Liberation Mono',monospace;letter-spacing:-0.6px">) (</div>
<div class="t" style="left:860.5px;top:312.64px;font-size:11px;color:#6f6f6f;font-weight:normal;font-family:'Liberation Mono',monospace;letter-spacing:-0.6px">5</div>
<div class="t" style="left:922px;top:312.64px;font-size:11px;color:#111;font-weight:normal;font-family:'Liberation Mono',monospace;letter-spacing:-0.6px">    <span style="color:#5e1670">input</span>                           clk  ,</div>
<div class="t" style="left:860.5px;top:331.64px;font-size:11px;color:#6f6f6f;font-weight:normal;font-family:'Liberation Mono',monospace;letter-spacing:-0.6px">6</div>
<div class="t" style="left:922px;top:331.64px;font-size:11px;color:#111;font-weight:normal;font-family:'Liberation Mono',monospace;letter-spacing:-0.6px">    <span style="color:#5e1670">input</span>                           rst  ,</div>
<div class="t" style="left:860.5px;top:350.64px;font-size:11px;color:#6f6f6f;font-weight:normal;font-family:'Liberation Mono',monospace;letter-spacing:-0.6px">7</div>
<div class="t" style="left:922px;top:350.64px;font-size:11px;color:#111;font-weight:normal;font-family:'Liberation Mono',monospace;letter-spacing:-0.6px">    <span style="color:#5e1670">input</span>                           last ,</div>
<div class="t" style="left:860.5px;top:369.64px;font-size:11px;color:#6f6f6f;font-weight:normal;font-family:'Liberation Mono',monospace;letter-spacing:-0.6px">8</div>
<div class="t" style="left:860.5px;top:388.64px;font-size:11px;color:#6f6f6f;font-weight:normal;font-family:'Liberation Mono',monospace;letter-spacing:-0.6px">9</div>
<div class="t" style="left:922px;top:388.64px;font-size:11px;color:#111;font-weight:normal;font-family:'Liberation Mono',monospace;letter-spacing:-0.6px">    <span style="color:#5e1670">input</span>                           ready,</div>
<div class="t" style="left:854.5px;top:407.64px;font-size:11px;color:#6f6f6f;font-weight:normal;font-family:'Liberation Mono',monospace;letter-spacing:-0.6px">10</div>
<div class="t" style="left:922px;top:407.64px;font-size:11px;color:#111;font-weight:normal;font-family:'Liberation Mono',monospace;letter-spacing:-0.6px">    <span style="color:#5e1670">input</span>                           valid,</div>
<div class="t" style="left:854.5px;top:426.64px;font-size:11px;color:#6f6f6f;font-weight:normal;font-family:'Liberation Mono',monospace;letter-spacing:-0.6px">11</div>
<div class="t" style="left:922px;top:426.64px;font-size:11px;color:#111;font-weight:normal;font-family:'Liberation Mono',monospace;letter-spacing:-0.6px">    <span style="color:#5e1670">input</span>      [DATA_WIDTH - 1 : 0] data</div>
<div class="t" style="left:854.5px;top:445.64px;font-size:11px;color:#6f6f6f;font-weight:normal;font-family:'Liberation Mono',monospace;letter-spacing:-0.6px">12</div>
<div class="t" style="left:922px;top:445.64px;font-size:11px;color:#111;font-weight:normal;font-family:'Liberation Mono',monospace;letter-spacing:-0.6px">);</div>
<div class="t" style="left:854.5px;top:464.64px;font-size:11px;color:#6f6f6f;font-weight:normal;font-family:'Liberation Mono',monospace;letter-spacing:-0.6px">13</div>
<div class="t" style="left:922px;top:464.64px;font-size:11px;color:#111;font-weight:normal;font-family:'Liberation Mono',monospace;letter-spacing:-0.6px"><span style="color:#86002e;font-weight:bold">integer</span> fp;</div>
<div class="t" style="left:854.5px;top:483.64px;font-size:11px;color:#6f6f6f;font-weight:normal;font-family:'Liberation Mono',monospace;letter-spacing:-0.6px">14</div>
<svg class="ico" style="left:871px;top:483px;" width="12" height="13" viewBox="0 0 12 13"><path d="M1.5 1.5 H10.5 V8.5 L6 12.2 L1.5 8.5 Z" fill="#fdfdfe" stroke="#6a6a6a" stroke-width="1"/><path d="M3.5 5.5 H8.5" stroke="#6a6a6a" stroke-width="1"/></svg>
<div class="t" style="left:922px;top:483.64px;font-size:11px;color:#111;font-weight:normal;font-family:'Liberation Mono',monospace;letter-spacing:-0.6px"><span style="color:#5e1670">task</span> save_file;</div>
<div class="t" style="left:854.5px;top:502.64px;font-size:11px;color:#6f6f6f;font-weight:normal;font-family:'Liberation Mono',monospace;letter-spacing:-0.6px">15</div>
<svg class="ico" style="left:871px;top:502px;" width="12" height="13" viewBox="0 0 12 13"><path d="M1.5 1.5 H10.5 V8.5 L6 12.2 L1.5 8.5 Z" fill="#fdfdfe" stroke="#6a6a6a" stroke-width="1"/><path d="M3.5 5.5 H8.5" stroke="#6a6a6a" stroke-width="1"/></svg>
<div class="t" style="left:922px;top:502.64px;font-size:11px;color:#111;font-weight:normal;font-family:'Liberation Mono',monospace;letter-spacing:-0.6px"><span style="color:#5e1670">begin</span></div>
<div class="t" style="left:854.5px;top:521.64px;font-size:11px;color:#6f6f6f;font-weight:normal;font-family:'Liberation Mono',monospace;letter-spacing:-0.6px">16</div>
<svg class="ico" style="left:894px;top:517px;" width="14" height="14" viewBox="0 0 14 14"><circle cx="7" cy="7" r="5.7" fill="none" stroke="#902a3c" stroke-width="1.05"/></svg>
<div class="t" style="left:922px;top:521.64px;font-size:11px;color:#111;font-weight:normal;font-family:'Liberation Mono',monospace;letter-spacing:-0.6px">    <span style="color:#5e1670">repeat</span>(5)<span style="color:#5e1670">@</span>(<span style="color:#5e1670">posedge</span> clk);</div>
<div class="t" style="left:854.5px;top:540.64px;font-size:11px;color:#6f6f6f;font-weight:normal;font-family:'Liberation Mono',monospace;letter-spacing:-0.6px">17</div>
<svg class="ico" style="left:894px;top:536px;" width="14" height="14" viewBox="0 0 14 14"><circle cx="7" cy="7" r="5.7" fill="none" stroke="#902a3c" stroke-width="1.05"/></svg>
<div class="t" style="left:922px;top:540.64px;font-size:11px;color:#111;font-weight:normal;font-family:'Liberation Mono',monospace;letter-spacing:-0.6px">    fp = $fopen(FILE_PATH,<span style="color:#1c2a7a;font-weight:bold">&quot;w&quot;</span>);</div>
<div class="t" style="left:854.5px;top:559.64px;font-size:11px;color:#6f6f6f;font-weight:normal;font-family:'Liberation Mono',monospace;letter-spacing:-0.6px">18</div>
<svg class="ico" style="left:871px;top:559px;" width="12" height="13" viewBox="0 0 12 13"><path d="M1.5 1.5 H10.5 V8.5 L6 12.2 L1.5 8.5 Z" fill="#fdfdfe" stroke="#6a6a6a" stroke-width="1"/><path d="M3.5 5.5 H8.5" stroke="#6a6a6a" stroke-width="1"/></svg>
<svg class="ico" style="left:894px;top:555px;" width="14" height="14" viewBox="0 0 14 14"><circle cx="7" cy="7" r="5.7" fill="none" stroke="#902a3c" stroke-width="1.05"/></svg>
<div class="t" style="left:922px;top:559.64px;font-size:11px;color:#111;font-weight:normal;font-family:'Liberation Mono',monospace;letter-spacing:-0.6px">    <span style="color:#5e1670">while</span> (!last) <span style="color:#5e1670">begin</span></div>
<div class="t" style="left:854.5px;top:578.64px;font-size:11px;color:#6f6f6f;font-weight:normal;font-family:'Liberation Mono',monospace;letter-spacing:-0.6px">19</div>
<svg class="ico" style="left:894px;top:574px;" width="14" height="14" viewBox="0 0 14 14"><circle cx="7" cy="7" r="5.7" fill="none" stroke="#902a3c" stroke-width="1.05"/></svg>
<div class="t" style="left:922px;top:578.64px;font-size:11px;color:#111;font-weight:normal;font-family:'Liberation Mono',monospace;letter-spacing:-0.6px">        <span style="color:#5e1670">@</span>(<span style="color:#5e1670">posedge</span> clk);</div>
<div class="t" style="left:854.5px;top:597.64px;font-size:11px;color:#6f6f6f;font-weight:normal;font-family:'Liberation Mono',monospace;letter-spacing:-0.6px">20</div>
<svg class="ico" style="left:871px;top:597px;" width="12" height="13" viewBox="0 0 12 13"><path d="M1.5 1.5 H10.5 V8.5 L6 12.2 L1.5 8.5 Z" fill="#fdfdfe" stroke="#6a6a6a" stroke-width="1"/><path d="M3.5 5.5 H8.5" stroke="#6a6a6a" stroke-width="1"/></svg>
<svg class="ico" style="left:894px;top:593px;" width="14" height="14" viewBox="0 0 14 14"><circle cx="7" cy="7" r="5.7" fill="none" stroke="#902a3c" stroke-width="1.05"/></svg>
<div class="t" style="left:922px;top:597.64px;font-size:11px;color:#111;font-weight:normal;font-family:'Liberation Mono',monospace;letter-spacing:-0.6px">        <span style="color:#5e1670">if</span>(valid &amp; ready)<span style="color:#5e1670">begin</span></div>
<div class="t" style="left:854.5px;top:616.64px;font-size:11px;color:#6f6f6f;font-weight:normal;font-family:'Liberation Mono',monospace;letter-spacing:-0.6px">21</div>
<svg class="ico" style="left:894px;top:612px;" width="14" height="14" viewBox="0 0 14 14"><circle cx="7" cy="7" r="5.7" fill="none" stroke="#902a3c" stroke-width="1.05"/></svg>
<div class="t" style="left:922px;top:616.64px;font-size:11px;color:#111;font-weight:normal;font-family:'Liberation Mono',monospace;letter-spacing:-0.6px">            <span style="color:#86002e;font-weight:bold">$fwrite</span>(fp,<span style="color:#1c2a7a;font-weight:bold">&quot;%d\n&quot;</span>,data);</div>
<div class="t" style="left:854.5px;top:635.64px;font-size:11px;color:#6f6f6f;font-weight:normal;font-family:'Liberation Mono',monospace;letter-spacing:-0.6px">22</div>
<svg class="ico" style="left:871px;top:635px;" width="12" height="13" viewBox="0 0 12 13"><path d="M1.5 4.5 L6 0.8 L10.5 4.5 V11.5 H1.5 Z" fill="#fdfdfe" stroke="#6a6a6a" stroke-width="1"/><path d="M3.5 7.5 H8.5" stroke="#6a6a6a" stroke-width="1"/></svg>
<div class="t" style="left:922px;top:635.64px;font-size:11px;color:#111;font-weight:normal;font-family:'Liberation Mono',monospace;letter-spacing:-0.6px">        <span style="color:#5e1670">end</span></div>
<div class="t" style="left:854.5px;top:654.64px;font-size:11px;color:#6f6f6f;font-weight:normal;font-family:'Liberation Mono',monospace;letter-spacing:-0.6px">23</div>
<svg class="ico" style="left:871px;top:654px;" width="12" height="13" viewBox="0 0 12 13"><path d="M1.5 4.5 L6 0.8 L10.5 4.5 V11.5 H1.5 Z" fill="#fdfdfe" stroke="#6a6a6a" stroke-width="1"/><path d="M3.5 7.5 H8.5" stroke="#6a6a6a" stroke-width="1"/></svg>
<div class="t" style="left:922px;top:654.64px;font-size:11px;color:#111;font-weight:normal;font-family:'Liberation Mono',monospace;letter-spacing:-0.6px">    <span style="color:#5e1670">end</span></div>
<div class="t" style="left:854.5px;top:673.64px;font-size:11px;color:#6f6f6f;font-weight:normal;font-family:'Liberation Mono',monospace;letter-spacing:-0.6px">24</div>
<svg class="ico" style="left:894px;top:669px;" width="14" height="14" viewBox="0 0 14 14"><circle cx="7" cy="7" r="5.7" fill="none" stroke="#902a3c" stroke-width="1.05"/></svg>
<div class="t" style="left:922px;top:673.64px;font-size:11px;color:#111;font-weight:normal;font-family:'Liberation Mono',monospace;letter-spacing:-0.6px">    <span style="color:#5e1670">repeat</span>(5)<span style="color:#5e1670">@</span>(<span style="color:#5e1670">posedge</span> clk);</div>
<div class="t" style="left:854.5px;top:692.64px;font-size:11px;color:#6f6f6f;font-weight:normal;font-family:'Liberation Mono',monospace;letter-spacing:-0.6px">25</div>
<svg class="ico" style="left:894px;top:688px;" width="14" height="14" viewBox="0 0 14 14"><circle cx="7" cy="7" r="5.7" fill="none" stroke="#902a3c" stroke-width="1.05"/></svg>
<div class="t" style="left:922px;top:692.64px;font-size:11px;color:#111;font-weight:normal;font-family:'Liberation Mono',monospace;letter-spacing:-0.6px">    $fclose(fp);</div>
<div class="t" style="left:854.5px;top:711.64px;font-size:11px;color:#6f6f6f;font-weight:normal;font-family:'Liberation Mono',monospace;letter-spacing:-0.6px">26</div>
<svg class="ico" style="left:894px;top:707px;" width="14" height="14" viewBox="0 0 14 14"><circle cx="7" cy="7" r="5.7" fill="none" stroke="#902a3c" stroke-width="1.05"/></svg>
<div class="t" style="left:922px;top:711.64px;font-size:11px;color:#111;font-weight:normal;font-family:'Liberation Mono',monospace;letter-spacing:-0.6px">    <span style="color:#5e1670">repeat</span>(5)<span style="color:#5e1670">@</span>(<span style="color:#5e1670">posedge</span> clk);</div>
<div class="t" style="left:854.5px;top:730.64px;font-size:11px;color:#6f6f6f;font-weight:normal;font-family:'Liberation Mono',monospace;letter-spacing:-0.6px">27</div>
<svg class="ico" style="left:894px;top:726px;" width="14" height="14" viewBox="0 0 14 14"><circle cx="7" cy="7" r="5.7" fill="none" stroke="#902a3c" stroke-width="1.05"/></svg>
<div class="t" style="left:922px;top:730.64px;font-size:11px;color:#111;font-weight:normal;font-family:'Liberation Mono',monospace;letter-spacing:-0.6px">    <span style="color:#86002e;font-weight:bold">$display</span>(<span style="color:#1c2a7a;font-weight:bold">&quot;sim scuess&quot;</span>);</div>
<div class="t" style="left:854.5px;top:749.64px;font-size:11px;color:#6f6f6f;font-weight:normal;font-family:'Liberation Mono',monospace;letter-spacing:-0.6px">28</div>
<svg class="ico" style="left:894px;top:745px;" width="14" height="14" viewBox="0 0 14 14"><circle cx="7" cy="7" r="5.7" fill="none" stroke="#902a3c" stroke-width="1.05"/></svg>
<div class="t" style="left:922px;top:749.64px;font-size:11px;color:#111;font-weight:normal;font-family:'Liberation Mono',monospace;letter-spacing:-0.6px">    <span style="color:#86002e;font-weight:bold">$stop</span>;</div>
<div class="t" style="left:854.5px;top:768.64px;font-size:11px;color:#6f6f6f;font-weight:normal;font-family:'Liberation Mono',monospace;letter-spacing:-0.6px">29</div>
<svg class="ico" style="left:871px;top:768px;" width="12" height="13" viewBox="0 0 12 13"><path d="M1.5 4.5 L6 0.8 L10.5 4.5 V11.5 H1.5 Z" fill="#fdfdfe" stroke="#6a6a6a" stroke-width="1"/><path d="M3.5 7.5 H8.5" stroke="#6a6a6a" stroke-width="1"/></svg>
<div class="t" style="left:922px;top:768.64px;font-size:11px;color:#111;font-weight:normal;font-family:'Liberation Mono',monospace;letter-spacing:-0.6px"><span style="color:#5e1670">end</span></div>
<div class="t" style="left:854.5px;top:787.64px;font-size:11px;color:#6f6f6f;font-weight:normal;font-family:'Liberation Mono',monospace;letter-spacing:-0.6px">30</div>
<svg class="ico" style="left:871px;top:787px;" width="12" height="13" viewBox="0 0 12 13"><path d="M1.5 4.5 L6 0.8 L10.5 4.5 V11.5 H1.5 Z" fill="#fdfdfe" stroke="#6a6a6a" stroke-width="1"/><path d="M3.5 7.5 H8.5" stroke="#6a6a6a" stroke-width="1"/></svg>
<div class="t" style="left:922px;top:787.64px;font-size:11px;color:#111;font-weight:normal;font-family:'Liberation Mono',monospace;letter-spacing:-0.6px"><span style="color:#5e1670">endtask</span></div>
<div class="t" style="left:854.5px;top:806.64px;font-size:11px;color:#6f6f6f;font-weight:normal;font-family:'Liberation Mono',monospace;letter-spacing:-0.6px">31</div>
<div class="t" style="left:854.5px;top:825.64px;font-size:11px;color:#6f6f6f;font-weight:normal;font-family:'Liberation Mono',monospace;letter-spacing:-0.6px">32</div>
<svg class="ico" style="left:871px;top:825px;" width="12" height="13" viewBox="0 0 12 13"><path d="M1.5 1.5 H10.5 V8.5 L6 12.2 L1.5 8.5 Z" fill="#fdfdfe" stroke="#6a6a6a" stroke-width="1"/><path d="M3.5 5.5 H8.5" stroke="#6a6a6a" stroke-width="1"/></svg>
<div class="t" style="left:922px;top:825.64px;font-size:11px;color:#111;font-weight:normal;font-family:'Liberation Mono',monospace;letter-spacing:-0.6px"><span style="color:#5e1670">initial</span> <span style="color:#5e1670">begin</span></div>
<div class="t" style="left:854.5px;top:844.64px;font-size:11px;color:#6f6f6f;font-weight:normal;font-family:'Liberation Mono',monospace;letter-spacing:-0.6px">33</div>
<svg class="ico" style="left:894px;top:840px;" width="14" height="14" viewBox="0 0 14 14"><circle cx="7" cy="7" r="5.7" fill="none" stroke="#902a3c" stroke-width="1.05"/></svg>
<div class="t" style="left:922px;top:844.64px;font-size:11px;color:#111;font-weight:normal;font-family:'Liberation Mono',monospace;letter-spacing:-0.6px">    save_file;</div>
<div class="t" style="left:854.5px;top:863.64px;font-size:11px;color:#6f6f6f;font-weight:normal;font-family:'Liberation Mono',monospace;letter-spacing:-0.6px">34</div>
<svg class="ico" style="left:871px;top:863px;" width="12" height="13" viewBox="0 0 12 13"><path d="M1.5 4.5 L6 0.8 L10.5 4.5 V11.5 H1.5 Z" fill="#fdfdfe" stroke="#6a6a6a" stroke-width="1"/><path d="M3.5 7.5 H8.5" stroke="#6a6a6a" stroke-width="1"/></svg>
<div class="t" style="left:922px;top:863.64px;font-size:11px;color:#111;font-weight:normal;font-family:'Liberation Mono',monospace;letter-spacing:-0.6px"><span style="color:#5e1670">end</span></div>
<div class="t" style="left:854.5px;top:882.64px;font-size:11px;color:#6f6f6f;font-weight:normal;font-family:'Liberation Mono',monospace;letter-spacing:-0.6px">35</div>
<div class="t" style="left:854.5px;top:901.64px;font-size:11px;color:#6f6f6f;font-weight:normal;font-family:'Liberation Mono',monospace;letter-spacing:-0.6px">36</div>
<svg class="ico" style="left:871px;top:901px;" width="12" height="13" viewBox="0 0 12 13"><path d="M1.5 4.5 L6 0.8 L10.5 4.5 V11.5 H1.5 Z" fill="#fdfdfe" stroke="#6a6a6a" stroke-width="1"/><path d="M3.5 7.5 H8.5" stroke="#6a6a6a" stroke-width="1"/></svg>
<div class="t" style="left:922px;top:901.64px;font-size:11px;color:#111;font-weight:normal;font-family:'Liberation Mono',monospace;letter-spacing:-0.6px"><span style="color:#5e1670">endmodule</span></div>
<svg class="ico" style="left:908px;top:746px;" width="14" height="12" viewBox="0 0 14 12"><path d="M1 4 H6 V1 L12 6 L6 11 V8 H1 Z" fill="#4f9fc0"/></svg>
<svg class="ico" style="left:1294px;top:651px;" width="9" height="18" viewBox="0 0 9 18"><path d="M0.5 1.5 H3.5 Q4.5 1.5 4.5 3 V15 Q4.5 16.5 3.5 16.5 H0.5 M8 1.5 H5.5 Q4.5 1.5 4.5 3 M4.5 15 Q4.5 16.5 5.5 16.5 H8" fill="none" stroke="#000" stroke-width="1.1"/></svg>
<div class="a" style="left:922px;top:948px;width:1601px;height:1px;background:#e8e8e8;"></div>
<div class="a" style="left:922px;top:949px;width:1601px;height:12px;background:#f8f8fa;"></div>
<svg class="ico" style="left:927px;top:951px;" width="7" height="10" viewBox="0 0 7 10"><path d="M6 0.8 L1.2 5.0 L6 9.2" fill="none" stroke="#6f6f6f" stroke-width="2"/></svg>
<svg class="ico" style="left:2513px;top:951px;" width="7" height="10" viewBox="0 0 7 10"><path d="M1 0.8 L5.8 5.0 L1 9.2" fill="none" stroke="#6f6f6f" stroke-width="2"/></svg>
<div class="a" style="left:251px;top:978px;width:2299px;height:389px;background:#fdfdfe;border:2px solid #d8d8da"></div>
<div class="a" style="left:253px;top:980px;width:2294px;height:31px;background:#ececee;"></div>
<div class="a" style="left:254px;top:981px;width:107px;height:30px;background:#fdfdfe;"></div>
<div class="t" style="left:260px;top:989.63px;font-size:12.2px;color:#111;font-weight:bold;font-family:'Liberation Sans',sans-serif;letter-spacing:-0.25px">Tcl Console</div>
<svg class="ico" style="left:348px;top:993px;" width="8" height="8" viewBox="0 0 8 8"><path d="M0.5 0.5 L7.5 7.5 M7.5 0.5 L0.5 7.5" stroke="#777" stroke-width="1.3"/></svg>
<div class="t" style="left:368px;top:989.63px;font-size:12.2px;color:#8e8e8e;font-weight:bold;font-family:'Liberation Sans',sans-serif;letter-spacing:-0.25px">Messages</div>
<div class="a" style="left:442px;top:982px;width:1px;height:26px;background:#d0d0d0;"></div>
<div class="t" style="left:449px;top:989.63px;font-size:12.2px;color:#8e8e8e;font-weight:bold;font-family:'Liberation Sans',sans-serif;letter-spacing:-0.25px">Log</div>
<div class="a" style="left:484px;top:982px;width:1px;height:26px;background:#d0d0d0;"></div>
<div class="t" style="left:2468px;top:991.10px;font-size:14px;color:#808080;font-weight:bold;font-family:'Liberation Sans',sans-serif;">?</div>
<div class="a" style="left:2488px;top:1001px;width:10px;height:2px;background:#808080;"></div>
<svg class="ico" style="left:2507px;top:992px;" width="12" height="12" viewBox="0 0 12 12"><rect x="1" y="1" width="10" height="10" fill="none" stroke="#808080" stroke-width="2"/></svg>
<svg class="ico" style="left:2527px;top:992px;" width="12" height="12" viewBox="0 0 12 12"><path d="M5 1 H1 V11 H11 V7" fill="none" stroke="#808080" stroke-width="2"/><path d="M6 6 L10.5 1.5 M8 1.2 H11 V4" fill="none" stroke="#808080" stroke-width="1.5"/></svg>
<svg class="ico" style="left:264px;top:1019px;" width="16" height="16" viewBox="0 0 16 16"><circle cx="6.5" cy="6.7" r="5.2" fill="none" stroke="#363f62" stroke-width="1.75"/><path d="M10.6 10.8 L12.6 12.8" stroke="#363f62" stroke-width="2.8" stroke-linecap="round"/></svg>
<svg class="ico" style="left:298px;top:1019px;" width="16" height="16" viewBox="0 0 16 16"><path d="M2 1.5 H14 L8 6 Z M2 14.5 H14 L8 10 Z" fill="#3a508c"/><rect x="1.5" y="7.2" width="13" height="1.8" fill="#2c3550"/></svg>
<svg class="ico" style="left:333px;top:1019px;" width="16" height="16" viewBox="0 0 16 16"><path d="M8.5 1.5 L14 6 H3 Z M8.5 14.5 L14 10 H3 Z" fill="#3a508c"/><rect x="3" y="7.2" width="11" height="1.8" fill="#2c3550"/></svg>
<svg class="ico" style="left:368px;top:1019px;" width="16" height="16" viewBox="0 0 16 16"><rect x="2.5" y="1.5" width="3.2" height="13" fill="#3a508c"/><rect x="9.5" y="1.5" width="3.2" height="13" fill="#3a508c"/></svg>
<svg class="ico" style="left:403px;top:1019px;" width="16" height="16" viewBox="0 0 16 16"><rect x="1.5" y="1" width="9" height="11" fill="#3a508c"/><rect x="4" y="3.5" width="10" height="12" fill="#fff" stroke="#3a508c" stroke-width="1.6"/><path d="M6 7 H12 M6 9.3 H12 M6 11.6 H12" stroke="#3a508c" stroke-width="1.2"/></svg>
<svg class="ico" style="left:438px;top:1019px;" width="16" height="16" viewBox="0 0 16 16"><rect x="1" y="1.5" width="14" height="13" fill="#fff" stroke="#3a508c" stroke-width="1.5"/><rect x="5" y="1.5" width="6" height="13" fill="#3a508c"/><path d="M1 5.5 H5 M1 9.5 H5 M11 5.5 H15 M11 9.5 H15" stroke="#3a508c" stroke-width="1.2"/></svg>
<svg class="ico" style="left:473px;top:1019px;" width="16" height="16" viewBox="0 0 16 16"><rect x="1" y="2.5" width="14" height="2" fill="#3a508c"/><rect x="5.5" y="0.5" width="5" height="2" fill="#3a508c"/><rect x="2.5" y="5" width="11" height="10.5" fill="#3a508c"/><rect x="5.5" y="7" width="1.6" height="7" fill="#fff"/><rect x="9" y="7" width="1.6" height="7" fill="#fff"/></svg>
<div class="a" style="left:288px;top:1017px;width:1px;height:21px;background:#e2e2e2;"></div>
<div class="a" style="left:323px;top:1017px;width:1px;height:21px;background:#e2e2e2;"></div>
<div class="a" style="left:358px;top:1017px;width:1px;height:21px;background:#e2e2e2;"></div>
<div class="a" style="left:393px;top:1017px;width:1px;height:21px;background:#e2e2e2;"></div>
<div class="a" style="left:428px;top:1017px;width:1px;height:21px;background:#e2e2e2;"></div>
<div class="a" style="left:463px;top:1017px;width:1px;height:21px;background:#e2e2e2;"></div>
<div class="a" style="left:498px;top:1017px;width:1px;height:21px;background:#e2e2e2;"></div>
<div class="a" style="left:253px;top:1043px;width:2294px;height:2px;background:#e4e4e4;"></div>
<div class="a" style="left:266px;top:1045px;width:1px;height:270px;background:repeating-linear-gradient(#606060 0 3px, transparent 3px 7px);"></div>
<div class="t" style="left:279px;top:1049.64px;font-size:11px;color:#111;font-weight:normal;font-family:'Liberation Mono',monospace;letter-spacing:-0.6px">sim success: dut:  24      ref:  24</div>
<div class="t" style="left:279px;top:1068.64px;font-size:11px;color:#111;font-weight:normal;font-family:'Liberation Mono',monospace;letter-spacing:-0.6px">sim success: dut:  24      ref:  24</div>
<div class="t" style="left:279px;top:1087.64px;font-size:11px;color:#111;font-weight:normal;font-family:'Liberation Mono',monospace;letter-spacing:-0.6px">sim success: dut:  24      ref:  24</div>
<div class="t" style="left:279px;top:1106.64px;font-size:11px;color:#111;font-weight:normal;font-family:'Liberation Mono',monospace;letter-spacing:-0.6px">sim success: dut:  24      ref:  24</div>
<div class="t" style="left:279px;top:1125.64px;font-size:11px;color:#111;font-weight:normal;font-family:'Liberation Mono',monospace;letter-spacing:-0.6px">sim success: dut:  24      ref:  24</div>
<div class="t" style="left:279px;top:1144.64px;font-size:11px;color:#111;font-weight:normal;font-family:'Liberation Mono',monospace;letter-spacing:-0.6px">sim success: dut:  24      ref:  24</div>
<div class="t" style="left:279px;top:1163.64px;font-size:11px;color:#111;font-weight:normal;font-family:'Liberation Mono',monospace;letter-spacing:-0.6px">sim success: dut:  24      ref:  24</div>
<div class="t" style="left:279px;top:1182.64px;font-size:11px;color:#111;font-weight:normal;font-family:'Liberation Mono',monospace;letter-spacing:-0.6px">sim success: dut:  24      ref:  24</div>
<div class="t" style="left:279px;top:1201.64px;font-size:11px;color:#111;font-weight:normal;font-family:'Liberation Mono',monospace;letter-spacing:-0.6px">sim success: dut:  24      ref:  24</div>
<div class="t" style="left:279px;top:1220.64px;font-size:11px;color:#111;font-weight:normal;font-family:'Liberation Mono',monospace;letter-spacing:-0.6px">sim success: dut:  24      ref:  24</div>
<div class="t" style="left:279px;top:1239.64px;font-size:11px;color:#111;font-weight:normal;font-family:'Liberation Mono',monospace;letter-spacing:-0.6px">sim scuess</div>
<div class="t" style="left:279px;top:1258.64px;font-size:11px;color:#111;font-weight:normal;font-family:'Liberation Mono',monospace;letter-spacing:-0.6px">$stop called at time : 37064155 ns : File &quot;E:/to_clahe/user/sim/common/tb_save_data.v&quot; Line 28</div>
<div class="t" style="left:279px;top:1277.64px;font-size:11px;color:#111;font-weight:normal;font-family:'Liberation Mono',monospace;letter-spacing:-0.6px">run: Time (s): cpu = 00:02:12 ; elapsed = 00:22:30 . Memory (MB): peak = 2225.781 ; gain = 20.402</div>
<div class="a" style="left:260px;top:1276px;width:13px;height:13px;background:#fdfdfe;"></div>
<svg class="ico" style="left:260px;top:1276px;" width="13" height="13" viewBox="0 0 13 13"><path d="M1 5 L6.5 1 L12 5 V12 H1 Z" fill="#fdfdfe" stroke="#8a8a8a" stroke-width="1"/><path d="M3.5 8 H9.5" stroke="#8a8a8a" stroke-width="1"/></svg>
<div class="a" style="left:2523px;top:1046px;width:1px;height:271px;background:#ececee;"></div>
<div class="a" style="left:2536px;top:1046px;width:1px;height:271px;background:#ececee;"></div>
<svg class="ico" style="left:2526px;top:1049px;" width="11" height="7" viewBox="0 0 11 7"><path d="M0.8 6 L5.5 1.2 L10.2 6" fill="none" stroke="#6f6f6f" stroke-width="2"/></svg>
<div class="a" style="left:2526px;top:1266px;width:8px;height:34px;background:#bdbdbd;border-radius:4px"></div>
<svg class="ico" style="left:2526px;top:1307px;" width="11" height="7" viewBox="0 0 11 7"><path d="M0.8 1 L5.5 5.8 L10.2 1" fill="none" stroke="#6f6f6f" stroke-width="2"/></svg>
<div class="a" style="left:279px;top:1317px;width:2244px;height:1px;background:#e8e8e8;"></div>
<div class="a" style="left:279px;top:1318px;width:2244px;height:13px;background:#f8f8fa;"></div>
<svg class="ico" style="left:284px;top:1320px;" width="7" height="10" viewBox="0 0 7 10"><path d="M6 0.8 L1.2 5.0 L6 9.2" fill="none" stroke="#6f6f6f" stroke-width="2"/></svg>
<svg class="ico" style="left:2513px;top:1320px;" width="7" height="10" viewBox="0 0 7 10"><path d="M1 0.8 L5.8 5.0 L1 9.2" fill="none" stroke="#6f6f6f" stroke-width="2"/></svg>
<div class="a" style="left:257px;top:1335px;width:2288px;height:26px;background:#fdfdfe;border:1px solid #a9a9a9"></div>
<div class="t" style="left:265px;top:1344.64px;font-size:11px;color:#7a7a7a;font-weight:normal;font-family:'Liberation Mono',monospace;letter-spacing:-0.6px">Type a Tcl command here</div>
<div class="a" style="left:0px;top:1392px;width:2560px;height:48px;background:#1e1e20;"></div>
<svg class="ico" style="left:893px;top:1405px;" width="23" height="23" viewBox="0 0 23 23"><rect x="0" y="0" width="10.8" height="10.8" fill="#3aa6ee"/><rect x="12.2" y="0" width="10.8" height="10.8" fill="#4cc0f8"/><rect x="0" y="12.2" width="10.8" height="10.8" fill="#2a90e0"/><rect x="12.2" y="12.2" width="10.8" height="10.8" fill="#3ab0f4"/></svg>
<div class="a" style="left:930px;top:1401px;width:218px;height:30px;background:#f0f0f0;border-radius:15px"></div>
<svg class="ico" style="left:940px;top:1408px;" width="16" height="16" viewBox="0 0 16 16"><circle cx="7" cy="7" r="5" fill="none" stroke="#222" stroke-width="1.6"/><path d="M10.5 10.5 L14.5 14.5" stroke="#222" stroke-width="1.8"/></svg>
<svg class="ico" style="left:966px;top:1409px;" width="28" height="14" viewBox="0 0 28 14"><g fill="none" stroke="#555" stroke-width="1.1"><path d="M0.5 4.5 H4.8 M2.6 0.5 V12.5 L1.6 12 M0.5 9.5 L4.8 6.8"/><path d="M6.2 1.5 V6.2 H12.3 V1.5 M6.2 3.8 H12.3 M9.25 0.3 V7 M6.2 8.3 H12.3 M11.6 8.5 Q10 12 6 13.2 M7.5 9.8 Q10 12.3 13 13.2"/><path d="M16 1.8 H26 M21 0.3 V3.5 M15.2 5.8 V4.2 H26.8 V5.8 M20.5 5.2 L17.5 8 H23.5 L18 11 H24.5 M21 9 V13.5 M18 12 L16.3 13.3 M24 12 L25.8 13.3"/></g></svg>
<svg class="ico" style="left:1095px;top:1401px;" width="53" height="30" viewBox="0 0 53 30"><circle cx="14" cy="9" r="4" fill="#e8e8ee" stroke="#8a8a9a" stroke-width="0.9"/><circle cx="19" cy="20" r="4.5" fill="#ececf2" stroke="#8a8a9a" stroke-width="0.9"/><path d="M26 30 Q31 21 38 22 Q44 23 47 28 L45 30 Z" fill="#6a9a5a"/><path d="M34 24 L38 30 L36 24 Z" fill="#fff"/><ellipse cx="37" cy="13" rx="6.5" ry="8.5" fill="#d8a882"/><path d="M29.5 11 Q30 2 37.5 2.5 Q45 3 44 12 Q43 6 37 6 Q32 6 30.5 12 Z" fill="#8a6a3a"/><path d="M34 17 H39" stroke="#8a4a3a" stroke-width="0.8"/></svg>
<svg class="ico" style="left:1160px;top:1403px" width="26" height="26" viewBox="0 0 24 24"><rect x="1" y="7" width="16" height="15" rx="1" fill="#6e6e6e"/><rect x="6" y="1" width="16" height="15" rx="1" fill="#e8e8e8"/><rect x="6" y="7" width="11" height="9" fill="#bdbdbd"/></svg>
<svg class="ico" style="left:1203px;top:1403px" width="26" height="26" viewBox="0 0 24 24"><rect x="2" y="3" width="20" height="18" rx="2" fill="#f4f4f4"/><path d="M4 6 L12 3 L20 17 L13 20 Z" fill="#d82a2a"/><path d="M4 6 L9 4 L14 18 L6 12 Z" fill="#3aa34a"/></svg>
<svg class="ico" style="left:1247px;top:1403px" width="26" height="26" viewBox="0 0 24 24"><path d="M2 5 H10 L12 7 H22 V20 H2 Z" fill="#f0c23a"/><rect x="2" y="9" width="20" height="11" fill="#ffd54f"/><rect x="8" y="14" width="9" height="6" fill="#1e88e5"/></svg>
<svg class="ico" style="left:1291px;top:1403px" width="26" height="26" viewBox="0 0 24 24"><circle cx="12" cy="12" r="10" fill="#1ea0e8"/><path d="M5 14 Q7 5 14 6 Q20 7 20 12 H9 Q10 18 18 17 Q12 22 7 19 Q4 17 5 14 Z" fill="#58d06a"/><path d="M6 16 Q10 22 17 19" fill="none" stroke="#1464c8" stroke-width="2"/></svg>
<svg class="ico" style="left:1335px;top:1403px" width="26" height="26" viewBox="0 0 24 24"><rect x="2" y="6" width="20" height="16" rx="2" fill="#f4f4f4"/><path d="M8 6 V3 H16 V6" fill="none" stroke="#3aa0e8" stroke-width="1.6"/><rect x="7" y="10" width="4.5" height="4.5" fill="#f25022"/><rect x="12.5" y="10" width="4.5" height="4.5" fill="#7fba00"/><rect x="7" y="15.5" width="4.5" height="4.5" fill="#00a4ef"/><rect x="12.5" y="15.5" width="4.5" height="4.5" fill="#ffb900"/></svg>
<svg class="ico" style="left:1379px;top:1403px" width="26" height="26" viewBox="0 0 24 24"><path d="M12 1 L23 12 L12 23 L1 12 Z" fill="#e8283a"/><path d="M12 1 L23 12 L12 12 Z" fill="#f0502a"/></svg>
<svg class="ico" style="left:1423px;top:1403px" width="26" height="26" viewBox="0 0 24 24"><path d="M17 2 L22 4.5 V19.5 L17 22 L7 13 L3 16 L1.5 15 V9 L3 8 L7 11 L17 2 Z M17 7 L11 12 L17 17 Z" fill="#2a8ae0"/></svg>
<svg class="ico" style="left:1467px;top:1403px" width="26" height="26" viewBox="0 0 24 24"><rect x="2" y="2" width="20" height="20" fill="#e8e020"/><rect x="4" y="4" width="16" height="16" fill="#111"/><text x="6" y="12.5" font-size="8" font-weight="bold" fill="#fff" font-family="Liberation Sans">PC</text><rect x="6" y="16" width="6" height="1.5" fill="#fff"/></svg>
<svg class="ico" style="left:1511px;top:1403px" width="26" height="26" viewBox="0 0 24 24"><path d="M17 2 L22 4.5 V19.5 L17 22 L7 13 L3 16 L1.5 15 V9 L3 8 L7 11 L17 2 Z M17 7 L11 12 L17 17 Z" fill="#8a5ad8"/></svg>
<div class="a" style="left:1549px;top:1397px;width:41px;height:40px;background:#2e2e30;border-radius:4px"></div>
<svg class="ico" style="left:1555px;top:1403px" width="26" height="26" viewBox="0 0 24 24"><rect x="1" y="1" width="22" height="22" fill="#000"/><path d="M6 5 H19 V18 L15 14 V9 H10 Z" fill="#fff"/><path d="M6 12 L10 9 V14 H15 L12 18 H6 Z" fill="#fff"/></svg>
<svg class="ico" style="left:1599px;top:1403px" width="26" height="26" viewBox="0 0 24 24"><circle cx="12" cy="12" r="10.5" fill="#2a2a2a" stroke="#cfcfcf" stroke-width="1.3"/><circle cx="12" cy="7" r="3" fill="none" stroke="#cfcfcf" stroke-width="1.2"/><circle cx="7.5" cy="14.5" r="3" fill="none" stroke="#cfcfcf" stroke-width="1.2"/><circle cx="16.5" cy="14.5" r="3" fill="none" stroke="#cfcfcf" stroke-width="1.2"/></svg>
<svg class="ico" style="left:1643px;top:1403px" width="26" height="26" viewBox="0 0 24 24"><rect x="4" y="2" width="16" height="20" rx="2" fill="#5a6a7a"/><rect x="6" y="4" width="12" height="4" fill="#8ab4d8"/><rect x="6" y="10" width="3" height="2.5" fill="#ddd"/><rect x="10.5" y="10" width="3" height="2.5" fill="#ddd"/><rect x="15" y="10" width="3" height="2.5" fill="#ddd"/><rect x="6" y="14" width="3" height="2.5" fill="#ddd"/><rect x="10.5" y="14" width="3" height="2.5" fill="#ddd"/><rect x="15" y="14" width="3" height="6" fill="#3a8ad8"/><rect x="6" y="18" width="3" height="2.5" fill="#ddd"/><rect x="10.5" y="18" width="3" height="2.5" fill="#ddd"/></svg>
<div class="a" style="left:1257px;top:1434px;width:6px;height:3px;background:#9a9a9a;border-radius:2px"></div>
<div class="a" style="left:1301px;top:1434px;width:6px;height:3px;background:#9a9a9a;border-radius:2px"></div>
<div class="a" style="left:1433px;top:1434px;width:6px;height:3px;background:#9a9a9a;border-radius:2px"></div>
<div class="a" style="left:1477px;top:1434px;width:6px;height:3px;background:#9a9a9a;border-radius:2px"></div>
<div class="a" style="left:1560px;top:1434px;width:16px;height:3px;background:#9ab8e8;border-radius:2px"></div>
<div class="a" style="left:1609px;top:1434px;width:6px;height:3px;background:#9a9a9a;border-radius:2px"></div>
<div class="a" style="left:1653px;top:1434px;width:6px;height:3px;background:#9a9a9a;border-radius:2px"></div>
<svg class="ico" style="left:2255px;top:1411px;" width="12" height="8" viewBox="0 0 12 8"><path d="M1 7 L6 2 L11 7" fill="none" stroke="#fff" stroke-width="1.5"/></svg>
<svg class="ico" style="left:2284px;top:1407px;" width="18" height="12" viewBox="0 0 18 12"><path d="M3 11 Q0 11 0.5 8 Q1 5.5 4 6 Q5 1 10 1.5 Q14 2 14.5 6 Q17.5 6 17.5 9 Q17.5 11 15 11 Z" fill="#d8d8d8"/></svg>
<svg class="ico" style="left:2319px;top:1406px;" width="12" height="18" viewBox="0 0 12 18"><rect x="3.5" y="1" width="5" height="10" rx="2.5" fill="none" stroke="#fff" stroke-width="1.3"/><path d="M1 8 Q1 13.5 6 13.5 Q11 13.5 11 8 M6 13.5 V17" fill="none" stroke="#fff" stroke-width="1.2"/></svg>
<svg class="ico" style="left:2349px;top:1408px;" width="14" height="15" viewBox="0 0 14 15"><rect x="1" y="4" width="12" height="7" fill="none" stroke="#fff" stroke-width="1.3"/><path d="M7 0.5 V14.5" stroke="#fff" stroke-width="1.3"/></svg>
<svg class="ico" style="left:2381px;top:1407px;" width="16" height="14" viewBox="0 0 16 14"><path d="M1 5 Q8 -1.5 15 5 M3.5 7.8 Q8 3.5 12.5 7.8 M5.8 10.3 Q8 8.2 10.2 10.3" fill="none" stroke="#fff" stroke-width="1.4"/><circle cx="8" cy="12.5" r="1.3" fill="#fff"/></svg>
<svg class="ico" style="left:2404px;top:1407px;" width="18" height="15" viewBox="0 0 18 15"><path d="M1 5 H4 L8 1.5 V13.5 L4 10 H1 Z" fill="none" stroke="#fff" stroke-width="1.2"/><path d="M10.5 5 Q12 7.5 10.5 10 M13 3 Q16 7.5 13 12" fill="none" stroke="#aaa" stroke-width="1.1"/></svg>
<svg class="ico" style="left:2428px;top:1407px;" width="18" height="15" viewBox="0 0 18 15"><rect x="1" y="4" width="14" height="9" rx="1.5" fill="none" stroke="#fff" stroke-width="1.3"/><rect x="15" y="7" width="2" height="3" fill="#fff"/><path d="M3 3 L5 0.5 V4 L7 6 L3 11" fill="none" stroke="#fff" stroke-width="1.1"/></svg>
<div class="t" style="left:2487px;top:1402.80px;font-size:12px;color:#fff;font-weight:normal;font-family:'Liberation Sans',sans-serif;">22:19</div>
<div class="t" style="left:2461px;top:1418.80px;font-size:12px;color:#fff;font-weight:normal;font-family:'Liberation Sans',sans-serif;">2024/3/24</div>
<svg class="ico" style="left:2525px;top:1408px;" width="14" height="16" viewBox="0 0 14 16"><path d="M7 1 Q2.5 1 2.5 6 V10 L1 12.5 H13 L11.5 10 V6 Q11.5 1 7 1 Z" fill="none" stroke="#fff" stroke-width="1.3"/><path d="M5 13.5 Q7 16 9 13.5" fill="none" stroke="#fff" stroke-width="1.2"/></svg>
</body></html>
